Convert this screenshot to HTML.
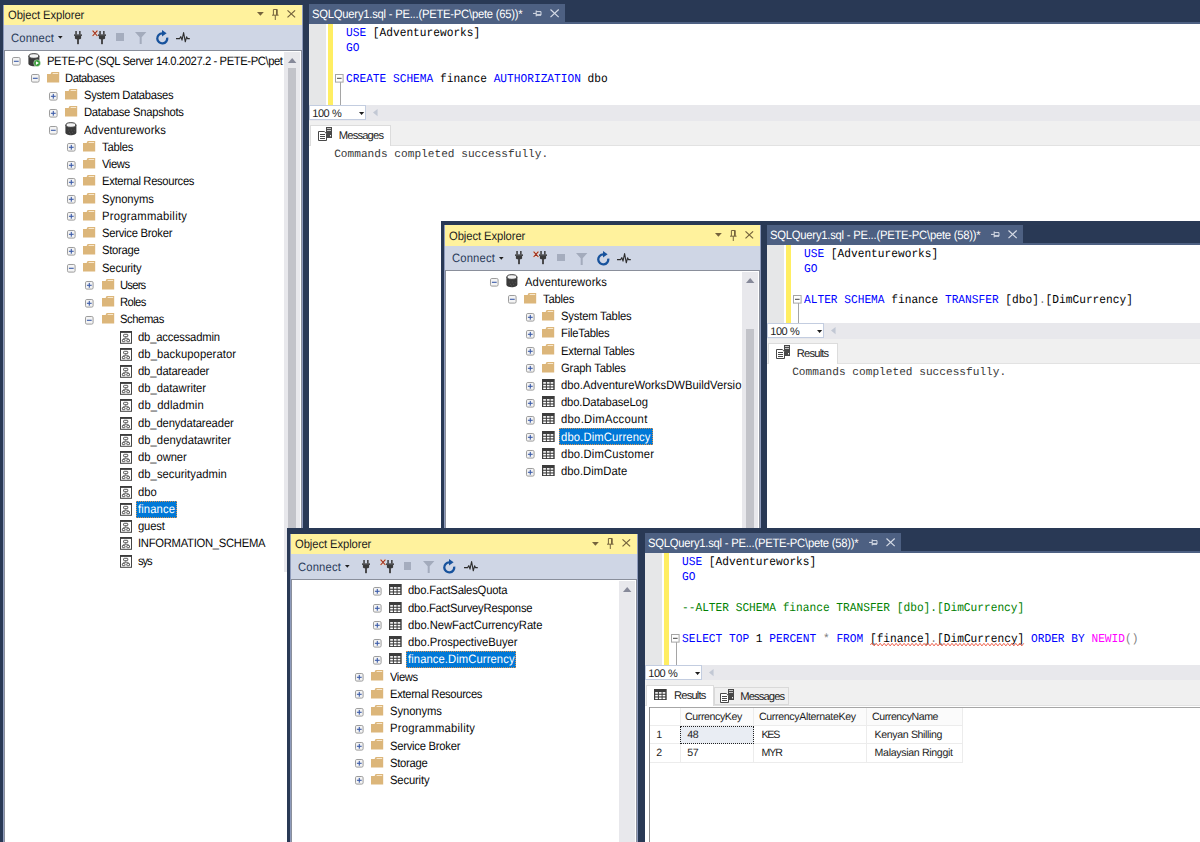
<!DOCTYPE html>
<html><head><meta charset="utf-8"><title>SSMS</title>
<style>
html,body{margin:0;padding:0}
body{width:1200px;height:842px;overflow:hidden;background:#293955;position:relative}
#r{position:absolute;left:0;top:0;width:1200px;height:842px;overflow:hidden}
#r>div,#r>svg,#r>span{position:absolute;display:block}
.t{white-space:pre;line-height:0;text-rendering:geometricPrecision}
svg{overflow:visible}
</style></head><body><div id="r">
<div style="left:0px;top:0px;width:1200px;height:842px;background:#293955;"></div>
<div style="left:3px;top:5px;width:300px;height:837px;background:#8e9bbc;"></div>
<div style="left:4px;top:5px;width:298px;height:20px;background:#fff29d;"></div>
<span class="t" style='left:7.9px;top:15px;font-family:"Liberation Sans", sans-serif;font-size:12.1px;color:#1e1e1e;letter-spacing:-0.09px;transform:scaleX(0.93);transform-origin:0 0;'>Object Explorer</span>
<svg style="left:256.7px;top:12.45px" width="6.8" height="4" viewBox="0 0 6.8 4"><path d="M0 0 H6.8 L3.4 3.8 Z" fill="#75633d"/></svg>
<svg style="left:272.4px;top:9.25px" width="6.6" height="11.2" viewBox="0 0 6.6 11.2"><path d="M1.4 0.5 H5.2 V6 M1.4 0.5 V6 M0 6.2 H6.6 M3.3 6.2 V11" fill="none" stroke="#75633d" stroke-width="1"/><rect x="4" y="0.5" width="1.2" height="5.6" fill="#75633d"/></svg>
<svg style="left:286.8px;top:10.05px" width="8.6" height="7.8" viewBox="0 0 8.6 7.8"><path d="M0.5 0.4 L8.1 7.4 M8.1 0.4 L0.5 7.4" stroke="#75633d" stroke-width="1.25" fill="none"/></svg>
<div style="left:4px;top:25px;width:298px;height:25px;background:#cfd6e5;"></div>
<span class="t" style='left:10.8px;top:38px;font-family:"Liberation Sans", sans-serif;font-size:12.1px;color:#2a3b5a;letter-spacing:0.16px;transform:scaleX(0.93);transform-origin:0 0;'>Connect</span>
<svg style="left:57.6px;top:35.95px" width="4.6" height="2.8" viewBox="0 0 4.6 2.8"><path d="M0 0 H4.6 L2.3 2.7 Z" fill="#1e1e1e"/></svg>
<svg style="left:74px;top:30.75px" width="8" height="13.2" viewBox="0 0 8 13.2"><rect x="1.3" y="0" width="1.5" height="3.6" fill="#3b3b3b"/><rect x="5.1" y="0" width="1.5" height="3.6" fill="#3b3b3b"/><rect x="0" y="3.4" width="8" height="1.5" fill="#3b3b3b"/><path d="M0.9 4.9 H7.1 V7.4 L6 8.3 H2 L0.9 7.4 Z" fill="#3b3b3b"/><rect x="3.1" y="8" width="1.8" height="5.2" fill="#3b3b3b"/></svg>
<svg style="left:92px;top:30.35px" width="6" height="6.6" viewBox="0 0 6 6.6"><path d="M0.6 0.6 L5.4 6 M5.4 0.6 L0.6 6" stroke="#ecd9c3" stroke-width="2.3" fill="none"/><path d="M0.6 0.6 L5.4 6 M5.4 0.6 L0.6 6" stroke="#9c2b1e" stroke-width="1.05" fill="none"/></svg>
<svg style="left:98.2px;top:30.75px" width="8" height="13.2" viewBox="0 0 8 13.2"><rect x="1.3" y="0" width="1.5" height="3.6" fill="#3b3b3b"/><rect x="5.1" y="0" width="1.5" height="3.6" fill="#3b3b3b"/><rect x="0" y="3.4" width="8" height="1.5" fill="#3b3b3b"/><path d="M0.9 4.9 H7.1 V7.4 L6 8.3 H2 L0.9 7.4 Z" fill="#3b3b3b"/><rect x="3.1" y="8" width="1.8" height="5.2" fill="#3b3b3b"/></svg>
<div style="left:116.2px;top:33.35px;width:7.4px;height:7.4px;background:#a5adbe;"></div>
<svg style="left:135.2px;top:31.85px" width="11.4" height="12" viewBox="0 0 11.4 12"><path d="M0 0 H11.4 L6.7 5.2 V12 H4.7 V5.2 Z" fill="#a3abbc"/></svg>
<svg style="left:155.5px;top:29.85px" width="13" height="14.6" viewBox="0 0 13 14.6"><path d="M6.3 3.4 A5 5 0 1 0 11.2 7.6" fill="none" stroke="#17529c" stroke-width="2.3"/><path d="M6 0 L10.6 3.2 L6 6.6 Z" fill="#17529c"/></svg>
<svg style="left:176.2px;top:32.25px" width="13.8" height="10.4" viewBox="0 0 13.8 10.4"><path d="M0 6.6 H3.6 L4.9 4.6 L6 8.2 L7.6 0.6 L9.3 9.8 L10.6 4.8 L11.4 6.6 H13.8" fill="none" stroke="#2e2e2e" stroke-width="1.1" stroke-linejoin="round"/></svg>
<div style="left:4px;top:50px;width:298px;height:792px;background:#8a8f9b;"></div>
<div style="left:5px;top:51px;width:296px;height:791px;background:#fff;"></div>
<div style="left:284px;top:52px;width:16px;height:520px;background:#e8e8ec;"></div>
<svg style="left:287.6px;top:57.6px" width="8.4" height="5" viewBox="0 0 8.4 5"><path d="M0 5 L4.2 0 L8.4 5 Z" fill="#868999"/></svg>
<div style="left:287.6px;top:68px;width:8.4px;height:503px;background:#c2c3c9;"></div>
<svg style="left:12.4px;top:57.25px" width="8.6" height="8.6" viewBox="0 0 8.6 8.6"><rect x="0.5" y="0.5" width="7.6" height="7.6" rx="1.3" fill="#f4f4f4" stroke="#9c9c9c" stroke-width="1"/><rect x="1.9" y="3.75" width="4.8" height="1.1" fill="#3d5ca8"/></svg>
<svg style="left:28.4px;top:53.15px" width="13" height="14" viewBox="0 0 13 14"><path d="M0.4 3 V10.6 C0.4 12.3 3 13.3 5.9 13.3 C8.8 13.3 11.4 12.3 11.4 10.6 V3 Z" fill="#3a3a3a"/><ellipse cx="5.9" cy="3" rx="5" ry="2.3" fill="#f4f4f4" stroke="#3a3a3a" stroke-width="1"/><circle cx="9.1" cy="10.1" r="3.4" fill="#339933" stroke="#e8f3e8" stroke-width="0.5"/><path d="M7.9 8.3 L11 10.1 L7.9 11.9 Z" fill="#fff"/></svg>
<span class="t" style='left:47.2px;top:61px;font-family:"Liberation Sans", sans-serif;font-size:12.1px;color:#0a0a0a;letter-spacing:-0.44px;transform:scaleX(0.93);transform-origin:0 0;'>PETE-PC (SQL Server 14.0.2027.2 - PETE-PC\pet</span>
<svg style="left:30.65px;top:74.48px" width="8.6" height="8.6" viewBox="0 0 8.6 8.6"><rect x="0.5" y="0.5" width="7.6" height="7.6" rx="1.3" fill="#f4f4f4" stroke="#9c9c9c" stroke-width="1"/><rect x="1.9" y="3.75" width="4.8" height="1.1" fill="#3d5ca8"/></svg>
<svg style="left:46.75px;top:71.88px" width="12.2" height="10.4" viewBox="0 0 12.2 10.4"><path d="M0 2 H3.6 L4.6 0 H12.2 V10.4 H0 Z" fill="#dcb67a"/><rect x="5.6" y="1.1" width="5.6" height="0.8" fill="#fff6e4"/></svg>
<span class="t" style='left:65.42px;top:78px;font-family:"Liberation Sans", sans-serif;font-size:12.1px;color:#0a0a0a;letter-spacing:-0.51px;transform:scaleX(0.93);transform-origin:0 0;'>Databases</span>
<svg style="left:48.9px;top:91.72px" width="8.6" height="8.6" viewBox="0 0 8.6 8.6"><rect x="0.5" y="0.5" width="7.6" height="7.6" rx="1.3" fill="#f4f4f4" stroke="#9c9c9c" stroke-width="1"/><rect x="1.9" y="3.75" width="4.8" height="1.1" fill="#3d5ca8"/><rect x="3.75" y="1.9" width="1.1" height="4.8" fill="#3d5ca8"/></svg>
<svg style="left:65px;top:89.12px" width="12.2" height="10.4" viewBox="0 0 12.2 10.4"><path d="M0 2 H3.6 L4.6 0 H12.2 V10.4 H0 Z" fill="#dcb67a"/><rect x="5.6" y="1.1" width="5.6" height="0.8" fill="#fff6e4"/></svg>
<span class="t" style='left:83.64px;top:95px;font-family:"Liberation Sans", sans-serif;font-size:12.1px;color:#0a0a0a;letter-spacing:-0.35px;transform:scaleX(0.93);transform-origin:0 0;'>System Databases</span>
<svg style="left:48.9px;top:108.95px" width="8.6" height="8.6" viewBox="0 0 8.6 8.6"><rect x="0.5" y="0.5" width="7.6" height="7.6" rx="1.3" fill="#f4f4f4" stroke="#9c9c9c" stroke-width="1"/><rect x="1.9" y="3.75" width="4.8" height="1.1" fill="#3d5ca8"/><rect x="3.75" y="1.9" width="1.1" height="4.8" fill="#3d5ca8"/></svg>
<svg style="left:65px;top:106.35px" width="12.2" height="10.4" viewBox="0 0 12.2 10.4"><path d="M0 2 H3.6 L4.6 0 H12.2 V10.4 H0 Z" fill="#dcb67a"/><rect x="5.6" y="1.1" width="5.6" height="0.8" fill="#fff6e4"/></svg>
<span class="t" style='left:83.64px;top:112px;font-family:"Liberation Sans", sans-serif;font-size:12.1px;color:#0a0a0a;letter-spacing:-0.28px;transform:scaleX(0.93);transform-origin:0 0;'>Database Snapshots</span>
<svg style="left:48.9px;top:126.19px" width="8.6" height="8.6" viewBox="0 0 8.6 8.6"><rect x="0.5" y="0.5" width="7.6" height="7.6" rx="1.3" fill="#f4f4f4" stroke="#9c9c9c" stroke-width="1"/><rect x="1.9" y="3.75" width="4.8" height="1.1" fill="#3d5ca8"/></svg>
<svg style="left:65.1px;top:122.19px" width="11.8" height="13.6" viewBox="0 0 11.8 13.6"><path d="M0.4 3 V10.6 C0.4 12.3 3 13.3 5.9 13.3 C8.8 13.3 11.4 12.3 11.4 10.6 V3 Z" fill="#3a3a3a"/><ellipse cx="5.9" cy="3" rx="5" ry="2.3" fill="#f4f4f4" stroke="#3a3a3a" stroke-width="1"/><circle cx="3.2" cy="8" r="0.45" fill="#6a6a6a"/><circle cx="6.2" cy="8" r="0.45" fill="#6a6a6a"/><circle cx="9.2" cy="8.8" r="0.45" fill="#6a6a6a"/><circle cx="4.6" cy="10.2" r="0.45" fill="#6a6a6a"/><circle cx="7.6" cy="10.2" r="0.45" fill="#6a6a6a"/><circle cx="5.6" cy="12" r="0.45" fill="#6a6a6a"/></svg>
<span class="t" style='left:83.64px;top:130px;font-family:"Liberation Sans", sans-serif;font-size:12.1px;color:#0a0a0a;letter-spacing:0.1px;transform:scaleX(0.93);transform-origin:0 0;'>Adventureworks</span>
<svg style="left:67.15px;top:143.42px" width="8.6" height="8.6" viewBox="0 0 8.6 8.6"><rect x="0.5" y="0.5" width="7.6" height="7.6" rx="1.3" fill="#f4f4f4" stroke="#9c9c9c" stroke-width="1"/><rect x="1.9" y="3.75" width="4.8" height="1.1" fill="#3d5ca8"/><rect x="3.75" y="1.9" width="1.1" height="4.8" fill="#3d5ca8"/></svg>
<svg style="left:83.25px;top:140.82px" width="12.2" height="10.4" viewBox="0 0 12.2 10.4"><path d="M0 2 H3.6 L4.6 0 H12.2 V10.4 H0 Z" fill="#dcb67a"/><rect x="5.6" y="1.1" width="5.6" height="0.8" fill="#fff6e4"/></svg>
<span class="t" style='left:101.86px;top:147px;font-family:"Liberation Sans", sans-serif;font-size:12.1px;color:#0a0a0a;letter-spacing:-0.22px;transform:scaleX(0.93);transform-origin:0 0;'>Tables</span>
<svg style="left:67.15px;top:160.66px" width="8.6" height="8.6" viewBox="0 0 8.6 8.6"><rect x="0.5" y="0.5" width="7.6" height="7.6" rx="1.3" fill="#f4f4f4" stroke="#9c9c9c" stroke-width="1"/><rect x="1.9" y="3.75" width="4.8" height="1.1" fill="#3d5ca8"/><rect x="3.75" y="1.9" width="1.1" height="4.8" fill="#3d5ca8"/></svg>
<svg style="left:83.25px;top:158.06px" width="12.2" height="10.4" viewBox="0 0 12.2 10.4"><path d="M0 2 H3.6 L4.6 0 H12.2 V10.4 H0 Z" fill="#dcb67a"/><rect x="5.6" y="1.1" width="5.6" height="0.8" fill="#fff6e4"/></svg>
<span class="t" style='left:101.86px;top:164px;font-family:"Liberation Sans", sans-serif;font-size:12.1px;color:#0a0a0a;letter-spacing:-0.48px;transform:scaleX(0.93);transform-origin:0 0;'>Views</span>
<svg style="left:67.15px;top:177.89px" width="8.6" height="8.6" viewBox="0 0 8.6 8.6"><rect x="0.5" y="0.5" width="7.6" height="7.6" rx="1.3" fill="#f4f4f4" stroke="#9c9c9c" stroke-width="1"/><rect x="1.9" y="3.75" width="4.8" height="1.1" fill="#3d5ca8"/><rect x="3.75" y="1.9" width="1.1" height="4.8" fill="#3d5ca8"/></svg>
<svg style="left:83.25px;top:175.29px" width="12.2" height="10.4" viewBox="0 0 12.2 10.4"><path d="M0 2 H3.6 L4.6 0 H12.2 V10.4 H0 Z" fill="#dcb67a"/><rect x="5.6" y="1.1" width="5.6" height="0.8" fill="#fff6e4"/></svg>
<span class="t" style='left:101.86px;top:181px;font-family:"Liberation Sans", sans-serif;font-size:12.1px;color:#0a0a0a;letter-spacing:-0.36px;transform:scaleX(0.93);transform-origin:0 0;'>External Resources</span>
<svg style="left:67.15px;top:195.13px" width="8.6" height="8.6" viewBox="0 0 8.6 8.6"><rect x="0.5" y="0.5" width="7.6" height="7.6" rx="1.3" fill="#f4f4f4" stroke="#9c9c9c" stroke-width="1"/><rect x="1.9" y="3.75" width="4.8" height="1.1" fill="#3d5ca8"/><rect x="3.75" y="1.9" width="1.1" height="4.8" fill="#3d5ca8"/></svg>
<svg style="left:83.25px;top:192.53px" width="12.2" height="10.4" viewBox="0 0 12.2 10.4"><path d="M0 2 H3.6 L4.6 0 H12.2 V10.4 H0 Z" fill="#dcb67a"/><rect x="5.6" y="1.1" width="5.6" height="0.8" fill="#fff6e4"/></svg>
<span class="t" style='left:101.86px;top:199px;font-family:"Liberation Sans", sans-serif;font-size:12.1px;color:#0a0a0a;letter-spacing:-0.08px;transform:scaleX(0.93);transform-origin:0 0;'>Synonyms</span>
<svg style="left:67.15px;top:212.37px" width="8.6" height="8.6" viewBox="0 0 8.6 8.6"><rect x="0.5" y="0.5" width="7.6" height="7.6" rx="1.3" fill="#f4f4f4" stroke="#9c9c9c" stroke-width="1"/><rect x="1.9" y="3.75" width="4.8" height="1.1" fill="#3d5ca8"/><rect x="3.75" y="1.9" width="1.1" height="4.8" fill="#3d5ca8"/></svg>
<svg style="left:83.25px;top:209.77px" width="12.2" height="10.4" viewBox="0 0 12.2 10.4"><path d="M0 2 H3.6 L4.6 0 H12.2 V10.4 H0 Z" fill="#dcb67a"/><rect x="5.6" y="1.1" width="5.6" height="0.8" fill="#fff6e4"/></svg>
<span class="t" style='left:101.86px;top:216px;font-family:"Liberation Sans", sans-serif;font-size:12.1px;color:#0a0a0a;letter-spacing:0.28px;transform:scaleX(0.93);transform-origin:0 0;'>Programmability</span>
<svg style="left:67.15px;top:229.6px" width="8.6" height="8.6" viewBox="0 0 8.6 8.6"><rect x="0.5" y="0.5" width="7.6" height="7.6" rx="1.3" fill="#f4f4f4" stroke="#9c9c9c" stroke-width="1"/><rect x="1.9" y="3.75" width="4.8" height="1.1" fill="#3d5ca8"/><rect x="3.75" y="1.9" width="1.1" height="4.8" fill="#3d5ca8"/></svg>
<svg style="left:83.25px;top:227px" width="12.2" height="10.4" viewBox="0 0 12.2 10.4"><path d="M0 2 H3.6 L4.6 0 H12.2 V10.4 H0 Z" fill="#dcb67a"/><rect x="5.6" y="1.1" width="5.6" height="0.8" fill="#fff6e4"/></svg>
<span class="t" style='left:101.86px;top:233px;font-family:"Liberation Sans", sans-serif;font-size:12.1px;color:#0a0a0a;letter-spacing:-0.27px;transform:scaleX(0.93);transform-origin:0 0;'>Service Broker</span>
<svg style="left:67.15px;top:246.83px" width="8.6" height="8.6" viewBox="0 0 8.6 8.6"><rect x="0.5" y="0.5" width="7.6" height="7.6" rx="1.3" fill="#f4f4f4" stroke="#9c9c9c" stroke-width="1"/><rect x="1.9" y="3.75" width="4.8" height="1.1" fill="#3d5ca8"/><rect x="3.75" y="1.9" width="1.1" height="4.8" fill="#3d5ca8"/></svg>
<svg style="left:83.25px;top:244.23px" width="12.2" height="10.4" viewBox="0 0 12.2 10.4"><path d="M0 2 H3.6 L4.6 0 H12.2 V10.4 H0 Z" fill="#dcb67a"/><rect x="5.6" y="1.1" width="5.6" height="0.8" fill="#fff6e4"/></svg>
<span class="t" style='left:101.86px;top:250px;font-family:"Liberation Sans", sans-serif;font-size:12.1px;color:#0a0a0a;letter-spacing:-0.29px;transform:scaleX(0.93);transform-origin:0 0;'>Storage</span>
<svg style="left:67.15px;top:264.07px" width="8.6" height="8.6" viewBox="0 0 8.6 8.6"><rect x="0.5" y="0.5" width="7.6" height="7.6" rx="1.3" fill="#f4f4f4" stroke="#9c9c9c" stroke-width="1"/><rect x="1.9" y="3.75" width="4.8" height="1.1" fill="#3d5ca8"/></svg>
<svg style="left:83.25px;top:261.47px" width="12.2" height="10.4" viewBox="0 0 12.2 10.4"><path d="M0 2 H3.6 L4.6 0 H12.2 V10.4 H0 Z" fill="#dcb67a"/><rect x="5.6" y="1.1" width="5.6" height="0.8" fill="#fff6e4"/></svg>
<span class="t" style='left:101.86px;top:268px;font-family:"Liberation Sans", sans-serif;font-size:12.1px;color:#0a0a0a;letter-spacing:-0.17px;transform:scaleX(0.93);transform-origin:0 0;'>Security</span>
<svg style="left:85.4px;top:281.31px" width="8.6" height="8.6" viewBox="0 0 8.6 8.6"><rect x="0.5" y="0.5" width="7.6" height="7.6" rx="1.3" fill="#f4f4f4" stroke="#9c9c9c" stroke-width="1"/><rect x="1.9" y="3.75" width="4.8" height="1.1" fill="#3d5ca8"/><rect x="3.75" y="1.9" width="1.1" height="4.8" fill="#3d5ca8"/></svg>
<svg style="left:101.5px;top:278.71px" width="12.2" height="10.4" viewBox="0 0 12.2 10.4"><path d="M0 2 H3.6 L4.6 0 H12.2 V10.4 H0 Z" fill="#dcb67a"/><rect x="5.6" y="1.1" width="5.6" height="0.8" fill="#fff6e4"/></svg>
<span class="t" style='left:120.08px;top:285px;font-family:"Liberation Sans", sans-serif;font-size:12.1px;color:#0a0a0a;letter-spacing:-0.84px;transform:scaleX(0.93);transform-origin:0 0;'>Users</span>
<svg style="left:85.4px;top:298.54px" width="8.6" height="8.6" viewBox="0 0 8.6 8.6"><rect x="0.5" y="0.5" width="7.6" height="7.6" rx="1.3" fill="#f4f4f4" stroke="#9c9c9c" stroke-width="1"/><rect x="1.9" y="3.75" width="4.8" height="1.1" fill="#3d5ca8"/><rect x="3.75" y="1.9" width="1.1" height="4.8" fill="#3d5ca8"/></svg>
<svg style="left:101.5px;top:295.94px" width="12.2" height="10.4" viewBox="0 0 12.2 10.4"><path d="M0 2 H3.6 L4.6 0 H12.2 V10.4 H0 Z" fill="#dcb67a"/><rect x="5.6" y="1.1" width="5.6" height="0.8" fill="#fff6e4"/></svg>
<span class="t" style='left:120.08px;top:302px;font-family:"Liberation Sans", sans-serif;font-size:12.1px;color:#0a0a0a;letter-spacing:-0.67px;transform:scaleX(0.93);transform-origin:0 0;'>Roles</span>
<svg style="left:85.4px;top:315.77px" width="8.6" height="8.6" viewBox="0 0 8.6 8.6"><rect x="0.5" y="0.5" width="7.6" height="7.6" rx="1.3" fill="#f4f4f4" stroke="#9c9c9c" stroke-width="1"/><rect x="1.9" y="3.75" width="4.8" height="1.1" fill="#3d5ca8"/></svg>
<svg style="left:101.5px;top:313.18px" width="12.2" height="10.4" viewBox="0 0 12.2 10.4"><path d="M0 2 H3.6 L4.6 0 H12.2 V10.4 H0 Z" fill="#dcb67a"/><rect x="5.6" y="1.1" width="5.6" height="0.8" fill="#fff6e4"/></svg>
<span class="t" style='left:120.08px;top:319px;font-family:"Liberation Sans", sans-serif;font-size:12.1px;color:#0a0a0a;letter-spacing:-0.47px;transform:scaleX(0.93);transform-origin:0 0;'>Schemas</span>
<svg style="left:119.55px;top:330.51px" width="12" height="12.8" viewBox="0 0 12 12.8"><rect x="0.5" y="0.5" width="11" height="11.8" fill="#fff" stroke="#444"/><rect x="0" y="0" width="12" height="1.9" fill="#3c3c3c"/><rect x="3.6" y="3.3" width="4.2" height="2.4" rx="0.7" fill="#fff" stroke="#4a4a4a" stroke-width="0.9"/><path d="M5.7 5.8 V7.4 M3.6 8.6 V7.4 H8.2 V8.6" fill="none" stroke="#666" stroke-width="0.8"/><rect x="2.3" y="8.4" width="2.7" height="2.3" rx="0.6" fill="#fff" stroke="#4a4a4a" stroke-width="0.9"/><rect x="6.8" y="8.4" width="2.7" height="2.3" rx="0.6" fill="#fff" stroke="#4a4a4a" stroke-width="0.9"/></svg>
<span class="t" style='left:138.3px;top:337px;font-family:"Liberation Sans", sans-serif;font-size:12.1px;color:#0a0a0a;letter-spacing:-0.2px;transform:scaleX(0.93);transform-origin:0 0;'>db_accessadmin</span>
<svg style="left:119.55px;top:347.75px" width="12" height="12.8" viewBox="0 0 12 12.8"><rect x="0.5" y="0.5" width="11" height="11.8" fill="#fff" stroke="#444"/><rect x="0" y="0" width="12" height="1.9" fill="#3c3c3c"/><rect x="3.6" y="3.3" width="4.2" height="2.4" rx="0.7" fill="#fff" stroke="#4a4a4a" stroke-width="0.9"/><path d="M5.7 5.8 V7.4 M3.6 8.6 V7.4 H8.2 V8.6" fill="none" stroke="#666" stroke-width="0.8"/><rect x="2.3" y="8.4" width="2.7" height="2.3" rx="0.6" fill="#fff" stroke="#4a4a4a" stroke-width="0.9"/><rect x="6.8" y="8.4" width="2.7" height="2.3" rx="0.6" fill="#fff" stroke="#4a4a4a" stroke-width="0.9"/></svg>
<span class="t" style='left:138.3px;top:354px;font-family:"Liberation Sans", sans-serif;font-size:12.1px;color:#0a0a0a;letter-spacing:0.07px;transform:scaleX(0.93);transform-origin:0 0;'>db_backupoperator</span>
<svg style="left:119.55px;top:364.98px" width="12" height="12.8" viewBox="0 0 12 12.8"><rect x="0.5" y="0.5" width="11" height="11.8" fill="#fff" stroke="#444"/><rect x="0" y="0" width="12" height="1.9" fill="#3c3c3c"/><rect x="3.6" y="3.3" width="4.2" height="2.4" rx="0.7" fill="#fff" stroke="#4a4a4a" stroke-width="0.9"/><path d="M5.7 5.8 V7.4 M3.6 8.6 V7.4 H8.2 V8.6" fill="none" stroke="#666" stroke-width="0.8"/><rect x="2.3" y="8.4" width="2.7" height="2.3" rx="0.6" fill="#fff" stroke="#4a4a4a" stroke-width="0.9"/><rect x="6.8" y="8.4" width="2.7" height="2.3" rx="0.6" fill="#fff" stroke="#4a4a4a" stroke-width="0.9"/></svg>
<span class="t" style='left:138.3px;top:371px;font-family:"Liberation Sans", sans-serif;font-size:12.1px;color:#0a0a0a;letter-spacing:-0.17px;transform:scaleX(0.93);transform-origin:0 0;'>db_datareader</span>
<svg style="left:119.55px;top:382.21px" width="12" height="12.8" viewBox="0 0 12 12.8"><rect x="0.5" y="0.5" width="11" height="11.8" fill="#fff" stroke="#444"/><rect x="0" y="0" width="12" height="1.9" fill="#3c3c3c"/><rect x="3.6" y="3.3" width="4.2" height="2.4" rx="0.7" fill="#fff" stroke="#4a4a4a" stroke-width="0.9"/><path d="M5.7 5.8 V7.4 M3.6 8.6 V7.4 H8.2 V8.6" fill="none" stroke="#666" stroke-width="0.8"/><rect x="2.3" y="8.4" width="2.7" height="2.3" rx="0.6" fill="#fff" stroke="#4a4a4a" stroke-width="0.9"/><rect x="6.8" y="8.4" width="2.7" height="2.3" rx="0.6" fill="#fff" stroke="#4a4a4a" stroke-width="0.9"/></svg>
<span class="t" style='left:138.3px;top:388px;font-family:"Liberation Sans", sans-serif;font-size:12.1px;color:#0a0a0a;letter-spacing:-0.01px;transform:scaleX(0.93);transform-origin:0 0;'>db_datawriter</span>
<svg style="left:119.55px;top:399.45px" width="12" height="12.8" viewBox="0 0 12 12.8"><rect x="0.5" y="0.5" width="11" height="11.8" fill="#fff" stroke="#444"/><rect x="0" y="0" width="12" height="1.9" fill="#3c3c3c"/><rect x="3.6" y="3.3" width="4.2" height="2.4" rx="0.7" fill="#fff" stroke="#4a4a4a" stroke-width="0.9"/><path d="M5.7 5.8 V7.4 M3.6 8.6 V7.4 H8.2 V8.6" fill="none" stroke="#666" stroke-width="0.8"/><rect x="2.3" y="8.4" width="2.7" height="2.3" rx="0.6" fill="#fff" stroke="#4a4a4a" stroke-width="0.9"/><rect x="6.8" y="8.4" width="2.7" height="2.3" rx="0.6" fill="#fff" stroke="#4a4a4a" stroke-width="0.9"/></svg>
<span class="t" style='left:138.3px;top:405px;font-family:"Liberation Sans", sans-serif;font-size:12.1px;color:#0a0a0a;letter-spacing:0.14px;transform:scaleX(0.93);transform-origin:0 0;'>db_ddladmin</span>
<svg style="left:119.55px;top:416.69px" width="12" height="12.8" viewBox="0 0 12 12.8"><rect x="0.5" y="0.5" width="11" height="11.8" fill="#fff" stroke="#444"/><rect x="0" y="0" width="12" height="1.9" fill="#3c3c3c"/><rect x="3.6" y="3.3" width="4.2" height="2.4" rx="0.7" fill="#fff" stroke="#4a4a4a" stroke-width="0.9"/><path d="M5.7 5.8 V7.4 M3.6 8.6 V7.4 H8.2 V8.6" fill="none" stroke="#666" stroke-width="0.8"/><rect x="2.3" y="8.4" width="2.7" height="2.3" rx="0.6" fill="#fff" stroke="#4a4a4a" stroke-width="0.9"/><rect x="6.8" y="8.4" width="2.7" height="2.3" rx="0.6" fill="#fff" stroke="#4a4a4a" stroke-width="0.9"/></svg>
<span class="t" style='left:138.3px;top:423px;font-family:"Liberation Sans", sans-serif;font-size:12.1px;color:#0a0a0a;letter-spacing:-0.12px;transform:scaleX(0.93);transform-origin:0 0;'>db_denydatareader</span>
<svg style="left:119.55px;top:433.92px" width="12" height="12.8" viewBox="0 0 12 12.8"><rect x="0.5" y="0.5" width="11" height="11.8" fill="#fff" stroke="#444"/><rect x="0" y="0" width="12" height="1.9" fill="#3c3c3c"/><rect x="3.6" y="3.3" width="4.2" height="2.4" rx="0.7" fill="#fff" stroke="#4a4a4a" stroke-width="0.9"/><path d="M5.7 5.8 V7.4 M3.6 8.6 V7.4 H8.2 V8.6" fill="none" stroke="#666" stroke-width="0.8"/><rect x="2.3" y="8.4" width="2.7" height="2.3" rx="0.6" fill="#fff" stroke="#4a4a4a" stroke-width="0.9"/><rect x="6.8" y="8.4" width="2.7" height="2.3" rx="0.6" fill="#fff" stroke="#4a4a4a" stroke-width="0.9"/></svg>
<span class="t" style='left:138.3px;top:440px;font-family:"Liberation Sans", sans-serif;font-size:12.1px;color:#0a0a0a;letter-spacing:0.03px;transform:scaleX(0.93);transform-origin:0 0;'>db_denydatawriter</span>
<svg style="left:119.55px;top:451.15px" width="12" height="12.8" viewBox="0 0 12 12.8"><rect x="0.5" y="0.5" width="11" height="11.8" fill="#fff" stroke="#444"/><rect x="0" y="0" width="12" height="1.9" fill="#3c3c3c"/><rect x="3.6" y="3.3" width="4.2" height="2.4" rx="0.7" fill="#fff" stroke="#4a4a4a" stroke-width="0.9"/><path d="M5.7 5.8 V7.4 M3.6 8.6 V7.4 H8.2 V8.6" fill="none" stroke="#666" stroke-width="0.8"/><rect x="2.3" y="8.4" width="2.7" height="2.3" rx="0.6" fill="#fff" stroke="#4a4a4a" stroke-width="0.9"/><rect x="6.8" y="8.4" width="2.7" height="2.3" rx="0.6" fill="#fff" stroke="#4a4a4a" stroke-width="0.9"/></svg>
<span class="t" style='left:138.3px;top:457px;font-family:"Liberation Sans", sans-serif;font-size:12.1px;color:#0a0a0a;letter-spacing:-0.1px;transform:scaleX(0.93);transform-origin:0 0;'>db_owner</span>
<svg style="left:119.55px;top:468.39px" width="12" height="12.8" viewBox="0 0 12 12.8"><rect x="0.5" y="0.5" width="11" height="11.8" fill="#fff" stroke="#444"/><rect x="0" y="0" width="12" height="1.9" fill="#3c3c3c"/><rect x="3.6" y="3.3" width="4.2" height="2.4" rx="0.7" fill="#fff" stroke="#4a4a4a" stroke-width="0.9"/><path d="M5.7 5.8 V7.4 M3.6 8.6 V7.4 H8.2 V8.6" fill="none" stroke="#666" stroke-width="0.8"/><rect x="2.3" y="8.4" width="2.7" height="2.3" rx="0.6" fill="#fff" stroke="#4a4a4a" stroke-width="0.9"/><rect x="6.8" y="8.4" width="2.7" height="2.3" rx="0.6" fill="#fff" stroke="#4a4a4a" stroke-width="0.9"/></svg>
<span class="t" style='left:138.3px;top:474px;font-family:"Liberation Sans", sans-serif;font-size:12.1px;color:#0a0a0a;letter-spacing:0.04px;transform:scaleX(0.93);transform-origin:0 0;'>db_securityadmin</span>
<svg style="left:119.55px;top:485.62px" width="12" height="12.8" viewBox="0 0 12 12.8"><rect x="0.5" y="0.5" width="11" height="11.8" fill="#fff" stroke="#444"/><rect x="0" y="0" width="12" height="1.9" fill="#3c3c3c"/><rect x="3.6" y="3.3" width="4.2" height="2.4" rx="0.7" fill="#fff" stroke="#4a4a4a" stroke-width="0.9"/><path d="M5.7 5.8 V7.4 M3.6 8.6 V7.4 H8.2 V8.6" fill="none" stroke="#666" stroke-width="0.8"/><rect x="2.3" y="8.4" width="2.7" height="2.3" rx="0.6" fill="#fff" stroke="#4a4a4a" stroke-width="0.9"/><rect x="6.8" y="8.4" width="2.7" height="2.3" rx="0.6" fill="#fff" stroke="#4a4a4a" stroke-width="0.9"/></svg>
<span class="t" style='left:138.3px;top:492px;font-family:"Liberation Sans", sans-serif;font-size:12.1px;color:#0a0a0a;letter-spacing:-0.01px;transform:scaleX(0.93);transform-origin:0 0;'>dbo</span>
<svg style="left:119.55px;top:502.86px" width="12" height="12.8" viewBox="0 0 12 12.8"><rect x="0.5" y="0.5" width="11" height="11.8" fill="#fff" stroke="#444"/><rect x="0" y="0" width="12" height="1.9" fill="#3c3c3c"/><rect x="3.6" y="3.3" width="4.2" height="2.4" rx="0.7" fill="#fff" stroke="#4a4a4a" stroke-width="0.9"/><path d="M5.7 5.8 V7.4 M3.6 8.6 V7.4 H8.2 V8.6" fill="none" stroke="#666" stroke-width="0.8"/><rect x="2.3" y="8.4" width="2.7" height="2.3" rx="0.6" fill="#fff" stroke="#4a4a4a" stroke-width="0.9"/><rect x="6.8" y="8.4" width="2.7" height="2.3" rx="0.6" fill="#fff" stroke="#4a4a4a" stroke-width="0.9"/></svg>
<div style="left:136px;top:500.56px;width:41.3px;height:17px;background:#0078d7;outline:1px dotted #d9924f;outline-offset:-1px;"></div>
<span class="t" style='left:138.3px;top:509px;font-family:"Liberation Sans", sans-serif;font-size:12.1px;color:#fff;letter-spacing:0.13px;transform:scaleX(0.93);transform-origin:0 0;'>finance</span>
<svg style="left:119.55px;top:520.1px" width="12" height="12.8" viewBox="0 0 12 12.8"><rect x="0.5" y="0.5" width="11" height="11.8" fill="#fff" stroke="#444"/><rect x="0" y="0" width="12" height="1.9" fill="#3c3c3c"/><rect x="3.6" y="3.3" width="4.2" height="2.4" rx="0.7" fill="#fff" stroke="#4a4a4a" stroke-width="0.9"/><path d="M5.7 5.8 V7.4 M3.6 8.6 V7.4 H8.2 V8.6" fill="none" stroke="#666" stroke-width="0.8"/><rect x="2.3" y="8.4" width="2.7" height="2.3" rx="0.6" fill="#fff" stroke="#4a4a4a" stroke-width="0.9"/><rect x="6.8" y="8.4" width="2.7" height="2.3" rx="0.6" fill="#fff" stroke="#4a4a4a" stroke-width="0.9"/></svg>
<span class="t" style='left:138.3px;top:526px;font-family:"Liberation Sans", sans-serif;font-size:12.1px;color:#0a0a0a;letter-spacing:-0.14px;transform:scaleX(0.93);transform-origin:0 0;'>guest</span>
<svg style="left:119.55px;top:537.33px" width="12" height="12.8" viewBox="0 0 12 12.8"><rect x="0.5" y="0.5" width="11" height="11.8" fill="#fff" stroke="#444"/><rect x="0" y="0" width="12" height="1.9" fill="#3c3c3c"/><rect x="3.6" y="3.3" width="4.2" height="2.4" rx="0.7" fill="#fff" stroke="#4a4a4a" stroke-width="0.9"/><path d="M5.7 5.8 V7.4 M3.6 8.6 V7.4 H8.2 V8.6" fill="none" stroke="#666" stroke-width="0.8"/><rect x="2.3" y="8.4" width="2.7" height="2.3" rx="0.6" fill="#fff" stroke="#4a4a4a" stroke-width="0.9"/><rect x="6.8" y="8.4" width="2.7" height="2.3" rx="0.6" fill="#fff" stroke="#4a4a4a" stroke-width="0.9"/></svg>
<span class="t" style='left:138.3px;top:543px;font-family:"Liberation Sans", sans-serif;font-size:12.1px;color:#0a0a0a;letter-spacing:-0.3px;transform:scaleX(0.93);transform-origin:0 0;'>INFORMATION_SCHEMA</span>
<svg style="left:119.55px;top:554.57px" width="12" height="12.8" viewBox="0 0 12 12.8"><rect x="0.5" y="0.5" width="11" height="11.8" fill="#fff" stroke="#444"/><rect x="0" y="0" width="12" height="1.9" fill="#3c3c3c"/><rect x="3.6" y="3.3" width="4.2" height="2.4" rx="0.7" fill="#fff" stroke="#4a4a4a" stroke-width="0.9"/><path d="M5.7 5.8 V7.4 M3.6 8.6 V7.4 H8.2 V8.6" fill="none" stroke="#666" stroke-width="0.8"/><rect x="2.3" y="8.4" width="2.7" height="2.3" rx="0.6" fill="#fff" stroke="#4a4a4a" stroke-width="0.9"/><rect x="6.8" y="8.4" width="2.7" height="2.3" rx="0.6" fill="#fff" stroke="#4a4a4a" stroke-width="0.9"/></svg>
<span class="t" style='left:138.3px;top:561px;font-family:"Liberation Sans", sans-serif;font-size:12.1px;color:#0a0a0a;letter-spacing:-1.27px;transform:scaleX(0.93);transform-origin:0 0;'>sys</span>
<div style="left:309px;top:4px;width:256px;height:18px;background:#4d6082;"></div>
<div style="left:309px;top:21.6px;width:891px;height:2px;background:#4d6082;"></div>
<span class="t" style='left:312.4px;top:14px;font-family:"Liberation Sans", sans-serif;font-size:12.1px;color:#fff;letter-spacing:-0.25px;transform:scaleX(0.93);transform-origin:0 0;'>SQLQuery1.sql - PE...(PETE-PC\pete (65))*</span>
<svg style="left:532.6px;top:10.2px" width="8.6" height="6.8" viewBox="0 0 8.6 6.8"><path d="M0 3.4 H3.2 M3.2 0.4 V6.4 M3.2 1.6 H8 V5.2 H3.2" fill="none" stroke="#d6dbe6" stroke-width="1"/><rect x="3.2" y="4.2" width="4.8" height="1.2" fill="#d6dbe6"/></svg>
<svg style="left:550.2px;top:9.2px" width="9.2" height="8.6" viewBox="0 0 9.2 8.6"><path d="M0.5 0.5 L8.7 8.1 M8.7 0.5 L0.5 8.1" stroke="#d6dbe6" stroke-width="1.2" fill="none"/></svg>
<div style="left:309px;top:23.6px;width:891px;height:81.4px;background:#fff;"></div>
<div style="left:309px;top:23.6px;width:17px;height:81.4px;background:#e6e7e8;"></div>
<div style="left:328.4px;top:23.6px;width:5px;height:81.4px;background:#ffee62;"></div>
<span class="t" style='left:345.6px;top:33px;font-family:"Liberation Mono", monospace;font-size:12px;transform:scale(0.9319,1);transform-origin:0 0;'><span style="color:#0000ff">USE</span><span style="color:#000"> [Adventureworks]</span></span>
<span class="t" style='left:345.6px;top:48px;font-family:"Liberation Mono", monospace;font-size:12px;transform:scale(0.9319,1);transform-origin:0 0;'><span style="color:#0000ff">GO</span></span>
<span class="t" style='left:345.6px;top:79px;font-family:"Liberation Mono", monospace;font-size:12px;transform:scale(0.9319,1);transform-origin:0 0;'><span style="color:#0000ff">CREATE</span><span style="color:#000"> </span><span style="color:#0000ff">SCHEMA</span><span style="color:#000"> finance </span><span style="color:#0000ff">AUTHORIZATION</span><span style="color:#000"> dbo</span></span>
<div style="left:339.6px;top:82.06px;width:1px;height:22.94px;background:#a5a5a5;"></div>
<svg style="left:335.4px;top:73.86px" width="8.6" height="8.6" viewBox="0 0 8.6 8.6"><rect x="0.5" y="0.5" width="7.6" height="7.6" fill="#fff" stroke="#a5a5a5"/><rect x="2" y="3.8" width="4.6" height="1" fill="#444"/></svg>
<div style="left:309px;top:105px;width:891px;height:15.6px;background:#e8e8ec;"></div>
<div style="left:309px;top:105px;width:57px;height:15.2px;background:#fff;border:1px solid #c3cde0;box-sizing:border-box;"></div>
<span class="t" style='left:312.2px;top:114px;font-family:"Liberation Sans", sans-serif;font-size:11px;color:#1e1e1e;letter-spacing:-0.4px;'>100 %</span>
<svg style="left:358.6px;top:112px" width="5.2" height="3" viewBox="0 0 5.2 3"><path d="M0 0 H5.2 L2.6 3 Z" fill="#1e1e1e"/></svg>
<svg style="left:373px;top:109.2px" width="4.6" height="7.2" viewBox="0 0 4.6 7.2"><path d="M4.6 0 V7.2 L0 3.6 Z" fill="#c2c8d4"/></svg>
<div style="left:309px;top:120.6px;width:891px;height:25.4px;background:#f0f0f0;"></div>
<div style="left:309px;top:145.4px;width:891px;height:1px;background:#e2e2e2;"></div>
<div style="left:309px;top:146.4px;width:891px;height:695.6px;background:#fff;"></div>
<div style="left:310px;top:125.2px;width:81px;height:21.2px;background:#fff;border:1px solid #dcdcdc;border-bottom:none;box-sizing:border-box;"></div>
<svg style="left:318px;top:127px" width="15" height="14" viewBox="0 0 15 14"><rect x="8" y="0" width="6" height="11" fill="#484848"/><rect x="9" y="1" width="4" height="1" fill="#c4c4c4"/><rect x="9" y="3" width="4" height="1" fill="#c4c4c4"/><rect x="12" y="8" width="1" height="1.4" fill="#f0f0f0"/><path d="M0.5 4.5 H6.3 L8.5 6.7 V13.5 H0.5 Z" fill="#fff" stroke="#484848" stroke-width="1"/><path d="M2 7.5 H7 M2 9.5 H7 M2 11.5 H7" stroke="#484848" stroke-width="1"/></svg>
<span class="t" style='left:338.8px;top:136px;font-family:"Liberation Sans", sans-serif;font-size:11.2px;color:#1e1e1e;letter-spacing:-0.83px;'>Messages</span>
<span class="t" style='left:334.2px;top:155px;font-family:"Liberation Mono", monospace;font-size:11.15px;color:#383838;'>Commands completed successfully.</span>
<div style="left:441px;top:221px;width:759px;height:311px;background:#293955;"></div>
<div style="left:444px;top:225px;width:317px;height:307px;background:#8e9bbc;"></div>
<div style="left:445px;top:225px;width:315px;height:21px;background:#fff29d;"></div>
<span class="t" style='left:449px;top:236px;font-family:"Liberation Sans", sans-serif;font-size:12.1px;color:#1e1e1e;letter-spacing:-0.09px;transform:scaleX(0.93);transform-origin:0 0;'>Object Explorer</span>
<svg style="left:714.7px;top:233.1px" width="6.8" height="4" viewBox="0 0 6.8 4"><path d="M0 0 H6.8 L3.4 3.8 Z" fill="#75633d"/></svg>
<svg style="left:730.4px;top:229.9px" width="6.6" height="11.2" viewBox="0 0 6.6 11.2"><path d="M1.4 0.5 H5.2 V6 M1.4 0.5 V6 M0 6.2 H6.6 M3.3 6.2 V11" fill="none" stroke="#75633d" stroke-width="1"/><rect x="4" y="0.5" width="1.2" height="5.6" fill="#75633d"/></svg>
<svg style="left:744.8px;top:230.7px" width="8.6" height="7.8" viewBox="0 0 8.6 7.8"><path d="M0.5 0.4 L8.1 7.4 M8.1 0.4 L0.5 7.4" stroke="#75633d" stroke-width="1.25" fill="none"/></svg>
<div style="left:445px;top:246px;width:315px;height:24px;background:#cfd6e5;"></div>
<span class="t" style='left:451.9px;top:258px;font-family:"Liberation Sans", sans-serif;font-size:12.1px;color:#2a3b5a;letter-spacing:0.16px;transform:scaleX(0.93);transform-origin:0 0;'>Connect</span>
<svg style="left:498.7px;top:256.6px" width="4.6" height="2.8" viewBox="0 0 4.6 2.8"><path d="M0 0 H4.6 L2.3 2.7 Z" fill="#1e1e1e"/></svg>
<svg style="left:515.1px;top:251.4px" width="8" height="13.2" viewBox="0 0 8 13.2"><rect x="1.3" y="0" width="1.5" height="3.6" fill="#3b3b3b"/><rect x="5.1" y="0" width="1.5" height="3.6" fill="#3b3b3b"/><rect x="0" y="3.4" width="8" height="1.5" fill="#3b3b3b"/><path d="M0.9 4.9 H7.1 V7.4 L6 8.3 H2 L0.9 7.4 Z" fill="#3b3b3b"/><rect x="3.1" y="8" width="1.8" height="5.2" fill="#3b3b3b"/></svg>
<svg style="left:533.1px;top:251px" width="6" height="6.6" viewBox="0 0 6 6.6"><path d="M0.6 0.6 L5.4 6 M5.4 0.6 L0.6 6" stroke="#ecd9c3" stroke-width="2.3" fill="none"/><path d="M0.6 0.6 L5.4 6 M5.4 0.6 L0.6 6" stroke="#9c2b1e" stroke-width="1.05" fill="none"/></svg>
<svg style="left:539.3px;top:251.4px" width="8" height="13.2" viewBox="0 0 8 13.2"><rect x="1.3" y="0" width="1.5" height="3.6" fill="#3b3b3b"/><rect x="5.1" y="0" width="1.5" height="3.6" fill="#3b3b3b"/><rect x="0" y="3.4" width="8" height="1.5" fill="#3b3b3b"/><path d="M0.9 4.9 H7.1 V7.4 L6 8.3 H2 L0.9 7.4 Z" fill="#3b3b3b"/><rect x="3.1" y="8" width="1.8" height="5.2" fill="#3b3b3b"/></svg>
<div style="left:557.3px;top:254px;width:7.4px;height:7.4px;background:#a5adbe;"></div>
<svg style="left:576.3px;top:252.5px" width="11.4" height="12" viewBox="0 0 11.4 12"><path d="M0 0 H11.4 L6.7 5.2 V12 H4.7 V5.2 Z" fill="#a3abbc"/></svg>
<svg style="left:596.6px;top:250.5px" width="13" height="14.6" viewBox="0 0 13 14.6"><path d="M6.3 3.4 A5 5 0 1 0 11.2 7.6" fill="none" stroke="#17529c" stroke-width="2.3"/><path d="M6 0 L10.6 3.2 L6 6.6 Z" fill="#17529c"/></svg>
<svg style="left:617.3px;top:252.9px" width="13.8" height="10.4" viewBox="0 0 13.8 10.4"><path d="M0 6.6 H3.6 L4.9 4.6 L6 8.2 L7.6 0.6 L9.3 9.8 L10.6 4.8 L11.4 6.6 H13.8" fill="none" stroke="#2e2e2e" stroke-width="1.1" stroke-linejoin="round"/></svg>
<div style="left:445px;top:270px;width:315px;height:262px;background:#8a8f9b;"></div>
<div style="left:446px;top:271px;width:313px;height:261px;background:#fff;"></div>
<div style="left:742px;top:272px;width:16px;height:260px;background:#e8e8ec;"></div>
<svg style="left:745.6px;top:277.6px" width="8.4" height="5" viewBox="0 0 8.4 5"><path d="M0 5 L4.2 0 L8.4 5 Z" fill="#868999"/></svg>
<div style="left:745.6px;top:329px;width:8.4px;height:203px;background:#c2c3c9;"></div>
<svg style="left:489.7px;top:278.1px" width="8.6" height="8.6" viewBox="0 0 8.6 8.6"><rect x="0.5" y="0.5" width="7.6" height="7.6" rx="1.3" fill="#f4f4f4" stroke="#9c9c9c" stroke-width="1"/><rect x="1.9" y="3.75" width="4.8" height="1.1" fill="#3d5ca8"/></svg>
<svg style="left:505.9px;top:274.1px" width="11.8" height="13.6" viewBox="0 0 11.8 13.6"><path d="M0.4 3 V10.6 C0.4 12.3 3 13.3 5.9 13.3 C8.8 13.3 11.4 12.3 11.4 10.6 V3 Z" fill="#3a3a3a"/><ellipse cx="5.9" cy="3" rx="5" ry="2.3" fill="#f4f4f4" stroke="#3a3a3a" stroke-width="1"/><circle cx="3.2" cy="8" r="0.45" fill="#6a6a6a"/><circle cx="6.2" cy="8" r="0.45" fill="#6a6a6a"/><circle cx="9.2" cy="8.8" r="0.45" fill="#6a6a6a"/><circle cx="4.6" cy="10.2" r="0.45" fill="#6a6a6a"/><circle cx="7.6" cy="10.2" r="0.45" fill="#6a6a6a"/><circle cx="5.6" cy="12" r="0.45" fill="#6a6a6a"/></svg>
<span class="t" style='left:524.84px;top:282px;font-family:"Liberation Sans", sans-serif;font-size:12.1px;color:#0a0a0a;letter-spacing:0.1px;transform:scaleX(0.93);transform-origin:0 0;'>Adventureworks</span>
<svg style="left:507.95px;top:295.33px" width="8.6" height="8.6" viewBox="0 0 8.6 8.6"><rect x="0.5" y="0.5" width="7.6" height="7.6" rx="1.3" fill="#f4f4f4" stroke="#9c9c9c" stroke-width="1"/><rect x="1.9" y="3.75" width="4.8" height="1.1" fill="#3d5ca8"/></svg>
<svg style="left:524.05px;top:292.74px" width="12.2" height="10.4" viewBox="0 0 12.2 10.4"><path d="M0 2 H3.6 L4.6 0 H12.2 V10.4 H0 Z" fill="#dcb67a"/><rect x="5.6" y="1.1" width="5.6" height="0.8" fill="#fff6e4"/></svg>
<span class="t" style='left:543.06px;top:299px;font-family:"Liberation Sans", sans-serif;font-size:12.1px;color:#0a0a0a;letter-spacing:-0.22px;transform:scaleX(0.93);transform-origin:0 0;'>Tables</span>
<svg style="left:526.2px;top:312.57px" width="8.6" height="8.6" viewBox="0 0 8.6 8.6"><rect x="0.5" y="0.5" width="7.6" height="7.6" rx="1.3" fill="#f4f4f4" stroke="#9c9c9c" stroke-width="1"/><rect x="1.9" y="3.75" width="4.8" height="1.1" fill="#3d5ca8"/><rect x="3.75" y="1.9" width="1.1" height="4.8" fill="#3d5ca8"/></svg>
<svg style="left:542.3px;top:309.97px" width="12.2" height="10.4" viewBox="0 0 12.2 10.4"><path d="M0 2 H3.6 L4.6 0 H12.2 V10.4 H0 Z" fill="#dcb67a"/><rect x="5.6" y="1.1" width="5.6" height="0.8" fill="#fff6e4"/></svg>
<span class="t" style='left:561.28px;top:316px;font-family:"Liberation Sans", sans-serif;font-size:12.1px;color:#0a0a0a;letter-spacing:-0.2px;transform:scaleX(0.93);transform-origin:0 0;'>System Tables</span>
<svg style="left:526.2px;top:329.8px" width="8.6" height="8.6" viewBox="0 0 8.6 8.6"><rect x="0.5" y="0.5" width="7.6" height="7.6" rx="1.3" fill="#f4f4f4" stroke="#9c9c9c" stroke-width="1"/><rect x="1.9" y="3.75" width="4.8" height="1.1" fill="#3d5ca8"/><rect x="3.75" y="1.9" width="1.1" height="4.8" fill="#3d5ca8"/></svg>
<svg style="left:542.3px;top:327.2px" width="12.2" height="10.4" viewBox="0 0 12.2 10.4"><path d="M0 2 H3.6 L4.6 0 H12.2 V10.4 H0 Z" fill="#dcb67a"/><rect x="5.6" y="1.1" width="5.6" height="0.8" fill="#fff6e4"/></svg>
<span class="t" style='left:561.28px;top:333px;font-family:"Liberation Sans", sans-serif;font-size:12.1px;color:#0a0a0a;letter-spacing:-0.23px;transform:scaleX(0.93);transform-origin:0 0;'>FileTables</span>
<svg style="left:526.2px;top:347.04px" width="8.6" height="8.6" viewBox="0 0 8.6 8.6"><rect x="0.5" y="0.5" width="7.6" height="7.6" rx="1.3" fill="#f4f4f4" stroke="#9c9c9c" stroke-width="1"/><rect x="1.9" y="3.75" width="4.8" height="1.1" fill="#3d5ca8"/><rect x="3.75" y="1.9" width="1.1" height="4.8" fill="#3d5ca8"/></svg>
<svg style="left:542.3px;top:344.44px" width="12.2" height="10.4" viewBox="0 0 12.2 10.4"><path d="M0 2 H3.6 L4.6 0 H12.2 V10.4 H0 Z" fill="#dcb67a"/><rect x="5.6" y="1.1" width="5.6" height="0.8" fill="#fff6e4"/></svg>
<span class="t" style='left:561.28px;top:351px;font-family:"Liberation Sans", sans-serif;font-size:12.1px;color:#0a0a0a;letter-spacing:-0.23px;transform:scaleX(0.93);transform-origin:0 0;'>External Tables</span>
<svg style="left:526.2px;top:364.27px" width="8.6" height="8.6" viewBox="0 0 8.6 8.6"><rect x="0.5" y="0.5" width="7.6" height="7.6" rx="1.3" fill="#f4f4f4" stroke="#9c9c9c" stroke-width="1"/><rect x="1.9" y="3.75" width="4.8" height="1.1" fill="#3d5ca8"/><rect x="3.75" y="1.9" width="1.1" height="4.8" fill="#3d5ca8"/></svg>
<svg style="left:542.3px;top:361.68px" width="12.2" height="10.4" viewBox="0 0 12.2 10.4"><path d="M0 2 H3.6 L4.6 0 H12.2 V10.4 H0 Z" fill="#dcb67a"/><rect x="5.6" y="1.1" width="5.6" height="0.8" fill="#fff6e4"/></svg>
<span class="t" style='left:561.28px;top:368px;font-family:"Liberation Sans", sans-serif;font-size:12.1px;color:#0a0a0a;letter-spacing:-0.17px;transform:scaleX(0.93);transform-origin:0 0;'>Graph Tables</span>
<svg style="left:526.2px;top:381.51px" width="8.6" height="8.6" viewBox="0 0 8.6 8.6"><rect x="0.5" y="0.5" width="7.6" height="7.6" rx="1.3" fill="#f4f4f4" stroke="#9c9c9c" stroke-width="1"/><rect x="1.9" y="3.75" width="4.8" height="1.1" fill="#3d5ca8"/><rect x="3.75" y="1.9" width="1.1" height="4.8" fill="#3d5ca8"/></svg>
<svg style="left:542.3px;top:378.91px" width="12.7" height="11" viewBox="0 0 12.7 11"><rect x="0" y="0" width="12.7" height="11" fill="#3c3c3c"/><rect x="1.2" y="3.1" width="2.7" height="1.6" fill="#fff"/><rect x="4.9" y="3.1" width="2.7" height="1.6" fill="#fff"/><rect x="8.6" y="3.1" width="2.7" height="1.6" fill="#fff"/><rect x="1.2" y="5.8" width="2.7" height="1.6" fill="#fff"/><rect x="4.9" y="5.8" width="2.7" height="1.6" fill="#fff"/><rect x="8.6" y="5.8" width="2.7" height="1.6" fill="#fff"/><rect x="1.2" y="8.5" width="2.7" height="1.6" fill="#fff"/><rect x="4.9" y="8.5" width="2.7" height="1.6" fill="#fff"/><rect x="8.6" y="8.5" width="2.7" height="1.6" fill="#fff"/></svg>
<span class="t" style='left:561.28px;top:385px;font-family:"Liberation Sans", sans-serif;font-size:12.1px;color:#0a0a0a;letter-spacing:0.02px;transform:scaleX(0.93);transform-origin:0 0;'>dbo.AdventureWorksDWBuildVersio</span>
<svg style="left:526.2px;top:398.74px" width="8.6" height="8.6" viewBox="0 0 8.6 8.6"><rect x="0.5" y="0.5" width="7.6" height="7.6" rx="1.3" fill="#f4f4f4" stroke="#9c9c9c" stroke-width="1"/><rect x="1.9" y="3.75" width="4.8" height="1.1" fill="#3d5ca8"/><rect x="3.75" y="1.9" width="1.1" height="4.8" fill="#3d5ca8"/></svg>
<svg style="left:542.3px;top:396.14px" width="12.7" height="11" viewBox="0 0 12.7 11"><rect x="0" y="0" width="12.7" height="11" fill="#3c3c3c"/><rect x="1.2" y="3.1" width="2.7" height="1.6" fill="#fff"/><rect x="4.9" y="3.1" width="2.7" height="1.6" fill="#fff"/><rect x="8.6" y="3.1" width="2.7" height="1.6" fill="#fff"/><rect x="1.2" y="5.8" width="2.7" height="1.6" fill="#fff"/><rect x="4.9" y="5.8" width="2.7" height="1.6" fill="#fff"/><rect x="8.6" y="5.8" width="2.7" height="1.6" fill="#fff"/><rect x="1.2" y="8.5" width="2.7" height="1.6" fill="#fff"/><rect x="4.9" y="8.5" width="2.7" height="1.6" fill="#fff"/><rect x="8.6" y="8.5" width="2.7" height="1.6" fill="#fff"/></svg>
<span class="t" style='left:561.28px;top:402px;font-family:"Liberation Sans", sans-serif;font-size:12.1px;color:#0a0a0a;letter-spacing:-0.14px;transform:scaleX(0.93);transform-origin:0 0;'>dbo.DatabaseLog</span>
<svg style="left:526.2px;top:415.98px" width="8.6" height="8.6" viewBox="0 0 8.6 8.6"><rect x="0.5" y="0.5" width="7.6" height="7.6" rx="1.3" fill="#f4f4f4" stroke="#9c9c9c" stroke-width="1"/><rect x="1.9" y="3.75" width="4.8" height="1.1" fill="#3d5ca8"/><rect x="3.75" y="1.9" width="1.1" height="4.8" fill="#3d5ca8"/></svg>
<svg style="left:542.3px;top:413.38px" width="12.7" height="11" viewBox="0 0 12.7 11"><rect x="0" y="0" width="12.7" height="11" fill="#3c3c3c"/><rect x="1.2" y="3.1" width="2.7" height="1.6" fill="#fff"/><rect x="4.9" y="3.1" width="2.7" height="1.6" fill="#fff"/><rect x="8.6" y="3.1" width="2.7" height="1.6" fill="#fff"/><rect x="1.2" y="5.8" width="2.7" height="1.6" fill="#fff"/><rect x="4.9" y="5.8" width="2.7" height="1.6" fill="#fff"/><rect x="8.6" y="5.8" width="2.7" height="1.6" fill="#fff"/><rect x="1.2" y="8.5" width="2.7" height="1.6" fill="#fff"/><rect x="4.9" y="8.5" width="2.7" height="1.6" fill="#fff"/><rect x="8.6" y="8.5" width="2.7" height="1.6" fill="#fff"/></svg>
<span class="t" style='left:561.28px;top:419px;font-family:"Liberation Sans", sans-serif;font-size:12.1px;color:#0a0a0a;letter-spacing:0.31px;transform:scaleX(0.93);transform-origin:0 0;'>dbo.DimAccount</span>
<svg style="left:526.2px;top:433.21px" width="8.6" height="8.6" viewBox="0 0 8.6 8.6"><rect x="0.5" y="0.5" width="7.6" height="7.6" rx="1.3" fill="#f4f4f4" stroke="#9c9c9c" stroke-width="1"/><rect x="1.9" y="3.75" width="4.8" height="1.1" fill="#3d5ca8"/><rect x="3.75" y="1.9" width="1.1" height="4.8" fill="#3d5ca8"/></svg>
<svg style="left:542.3px;top:430.62px" width="12.7" height="11" viewBox="0 0 12.7 11"><rect x="0" y="0" width="12.7" height="11" fill="#3c3c3c"/><rect x="1.2" y="3.1" width="2.7" height="1.6" fill="#fff"/><rect x="4.9" y="3.1" width="2.7" height="1.6" fill="#fff"/><rect x="8.6" y="3.1" width="2.7" height="1.6" fill="#fff"/><rect x="1.2" y="5.8" width="2.7" height="1.6" fill="#fff"/><rect x="4.9" y="5.8" width="2.7" height="1.6" fill="#fff"/><rect x="8.6" y="5.8" width="2.7" height="1.6" fill="#fff"/><rect x="1.2" y="8.5" width="2.7" height="1.6" fill="#fff"/><rect x="4.9" y="8.5" width="2.7" height="1.6" fill="#fff"/><rect x="8.6" y="8.5" width="2.7" height="1.6" fill="#fff"/></svg>
<div style="left:558.98px;top:428.41px;width:93.8px;height:17px;background:#0078d7;outline:1px dotted #d9924f;outline-offset:-1px;"></div>
<span class="t" style='left:561.28px;top:437px;font-family:"Liberation Sans", sans-serif;font-size:12.1px;color:#fff;letter-spacing:0.15px;transform:scaleX(0.93);transform-origin:0 0;'>dbo.DimCurrency</span>
<svg style="left:526.2px;top:450.45px" width="8.6" height="8.6" viewBox="0 0 8.6 8.6"><rect x="0.5" y="0.5" width="7.6" height="7.6" rx="1.3" fill="#f4f4f4" stroke="#9c9c9c" stroke-width="1"/><rect x="1.9" y="3.75" width="4.8" height="1.1" fill="#3d5ca8"/><rect x="3.75" y="1.9" width="1.1" height="4.8" fill="#3d5ca8"/></svg>
<svg style="left:542.3px;top:447.85px" width="12.7" height="11" viewBox="0 0 12.7 11"><rect x="0" y="0" width="12.7" height="11" fill="#3c3c3c"/><rect x="1.2" y="3.1" width="2.7" height="1.6" fill="#fff"/><rect x="4.9" y="3.1" width="2.7" height="1.6" fill="#fff"/><rect x="8.6" y="3.1" width="2.7" height="1.6" fill="#fff"/><rect x="1.2" y="5.8" width="2.7" height="1.6" fill="#fff"/><rect x="4.9" y="5.8" width="2.7" height="1.6" fill="#fff"/><rect x="8.6" y="5.8" width="2.7" height="1.6" fill="#fff"/><rect x="1.2" y="8.5" width="2.7" height="1.6" fill="#fff"/><rect x="4.9" y="8.5" width="2.7" height="1.6" fill="#fff"/><rect x="8.6" y="8.5" width="2.7" height="1.6" fill="#fff"/></svg>
<span class="t" style='left:561.28px;top:454px;font-family:"Liberation Sans", sans-serif;font-size:12.1px;color:#0a0a0a;letter-spacing:0.18px;transform:scaleX(0.93);transform-origin:0 0;'>dbo.DimCustomer</span>
<svg style="left:526.2px;top:467.68px" width="8.6" height="8.6" viewBox="0 0 8.6 8.6"><rect x="0.5" y="0.5" width="7.6" height="7.6" rx="1.3" fill="#f4f4f4" stroke="#9c9c9c" stroke-width="1"/><rect x="1.9" y="3.75" width="4.8" height="1.1" fill="#3d5ca8"/><rect x="3.75" y="1.9" width="1.1" height="4.8" fill="#3d5ca8"/></svg>
<svg style="left:542.3px;top:465.08px" width="12.7" height="11" viewBox="0 0 12.7 11"><rect x="0" y="0" width="12.7" height="11" fill="#3c3c3c"/><rect x="1.2" y="3.1" width="2.7" height="1.6" fill="#fff"/><rect x="4.9" y="3.1" width="2.7" height="1.6" fill="#fff"/><rect x="8.6" y="3.1" width="2.7" height="1.6" fill="#fff"/><rect x="1.2" y="5.8" width="2.7" height="1.6" fill="#fff"/><rect x="4.9" y="5.8" width="2.7" height="1.6" fill="#fff"/><rect x="8.6" y="5.8" width="2.7" height="1.6" fill="#fff"/><rect x="1.2" y="8.5" width="2.7" height="1.6" fill="#fff"/><rect x="4.9" y="8.5" width="2.7" height="1.6" fill="#fff"/><rect x="8.6" y="8.5" width="2.7" height="1.6" fill="#fff"/></svg>
<span class="t" style='left:561.28px;top:471px;font-family:"Liberation Sans", sans-serif;font-size:12.1px;color:#0a0a0a;letter-spacing:0.06px;transform:scaleX(0.93);transform-origin:0 0;'>dbo.DimDate</span>
<div style="left:767px;top:225px;width:256px;height:18px;background:#4d6082;"></div>
<div style="left:767px;top:242.6px;width:433px;height:2px;background:#4d6082;"></div>
<span class="t" style='left:770.4px;top:235px;font-family:"Liberation Sans", sans-serif;font-size:12.1px;color:#fff;letter-spacing:-0.25px;transform:scaleX(0.93);transform-origin:0 0;'>SQLQuery1.sql - PE...(PETE-PC\pete (58))*</span>
<svg style="left:990.6px;top:231.2px" width="8.6" height="6.8" viewBox="0 0 8.6 6.8"><path d="M0 3.4 H3.2 M3.2 0.4 V6.4 M3.2 1.6 H8 V5.2 H3.2" fill="none" stroke="#d6dbe6" stroke-width="1"/><rect x="3.2" y="4.2" width="4.8" height="1.2" fill="#d6dbe6"/></svg>
<svg style="left:1008.2px;top:230.2px" width="9.2" height="8.6" viewBox="0 0 9.2 8.6"><path d="M0.5 0.5 L8.7 8.1 M8.7 0.5 L0.5 8.1" stroke="#d6dbe6" stroke-width="1.2" fill="none"/></svg>
<div style="left:767px;top:244.6px;width:433px;height:78.4px;background:#fff;"></div>
<div style="left:767px;top:244.6px;width:17px;height:78.4px;background:#e6e7e8;"></div>
<div style="left:786.4px;top:244.6px;width:5px;height:78.4px;background:#ffee62;"></div>
<span class="t" style='left:803.6px;top:254px;font-family:"Liberation Mono", monospace;font-size:12px;transform:scale(0.9319,1);transform-origin:0 0;'><span style="color:#0000ff">USE</span><span style="color:#000"> [Adventureworks]</span></span>
<span class="t" style='left:803.6px;top:269px;font-family:"Liberation Mono", monospace;font-size:12px;transform:scale(0.9319,1);transform-origin:0 0;'><span style="color:#0000ff">GO</span></span>
<span class="t" style='left:803.6px;top:300px;font-family:"Liberation Mono", monospace;font-size:12px;transform:scale(0.9319,1);transform-origin:0 0;'><span style="color:#0000ff">ALTER</span><span style="color:#000"> </span><span style="color:#0000ff">SCHEMA</span><span style="color:#000"> finance </span><span style="color:#0000ff">TRANSFER</span><span style="color:#000"> [dbo]</span><span style="color:#808080">.</span><span style="color:#000">[DimCurrency]</span></span>
<div style="left:797.6px;top:303.06px;width:1px;height:19.94px;background:#a5a5a5;"></div>
<svg style="left:793.4px;top:294.86px" width="8.6" height="8.6" viewBox="0 0 8.6 8.6"><rect x="0.5" y="0.5" width="7.6" height="7.6" fill="#fff" stroke="#a5a5a5"/><rect x="2" y="3.8" width="4.6" height="1" fill="#444"/></svg>
<div style="left:767px;top:323px;width:433px;height:15.6px;background:#e8e8ec;"></div>
<div style="left:767px;top:323px;width:57px;height:15.2px;background:#fff;border:1px solid #c3cde0;box-sizing:border-box;"></div>
<span class="t" style='left:770.2px;top:332px;font-family:"Liberation Sans", sans-serif;font-size:11px;color:#1e1e1e;letter-spacing:-0.4px;'>100 %</span>
<svg style="left:816.6px;top:330px" width="5.2" height="3" viewBox="0 0 5.2 3"><path d="M0 0 H5.2 L2.6 3 Z" fill="#1e1e1e"/></svg>
<svg style="left:831px;top:327.2px" width="4.6" height="7.2" viewBox="0 0 4.6 7.2"><path d="M4.6 0 V7.2 L0 3.6 Z" fill="#c2c8d4"/></svg>
<div style="left:767px;top:338.6px;width:433px;height:25.4px;background:#f0f0f0;"></div>
<div style="left:767px;top:363.4px;width:433px;height:1px;background:#e2e2e2;"></div>
<div style="left:767px;top:364.4px;width:433px;height:167.6px;background:#fff;"></div>
<div style="left:768px;top:343.2px;width:70px;height:21.2px;background:#fff;border:1px solid #dcdcdc;border-bottom:none;box-sizing:border-box;"></div>
<svg style="left:776px;top:345px" width="15" height="14" viewBox="0 0 15 14"><rect x="8" y="0" width="6" height="11" fill="#484848"/><rect x="9" y="1" width="4" height="1" fill="#c4c4c4"/><rect x="9" y="3" width="4" height="1" fill="#c4c4c4"/><rect x="12" y="8" width="1" height="1.4" fill="#f0f0f0"/><path d="M0.5 4.5 H6.3 L8.5 6.7 V13.5 H0.5 Z" fill="#fff" stroke="#484848" stroke-width="1"/><path d="M2 7.5 H7 M2 9.5 H7 M2 11.5 H7" stroke="#484848" stroke-width="1"/></svg>
<span class="t" style='left:796.8px;top:354px;font-family:"Liberation Sans", sans-serif;font-size:11.2px;color:#1e1e1e;letter-spacing:-0.82px;'>Results</span>
<span class="t" style='left:792.2px;top:373px;font-family:"Liberation Mono", monospace;font-size:11.15px;color:#383838;'>Commands completed successfully.</span>
<div style="left:287px;top:528.4px;width:913px;height:313.6px;background:#293955;"></div>
<div style="left:290px;top:534px;width:348px;height:308px;background:#8e9bbc;"></div>
<div style="left:291px;top:534px;width:346px;height:20px;background:#fff29d;"></div>
<span class="t" style='left:295.4px;top:544px;font-family:"Liberation Sans", sans-serif;font-size:12.1px;color:#1e1e1e;letter-spacing:-0.09px;transform:scaleX(0.93);transform-origin:0 0;'>Object Explorer</span>
<svg style="left:591.7px;top:541.5px" width="6.8" height="4" viewBox="0 0 6.8 4"><path d="M0 0 H6.8 L3.4 3.8 Z" fill="#75633d"/></svg>
<svg style="left:607.4px;top:538.3px" width="6.6" height="11.2" viewBox="0 0 6.6 11.2"><path d="M1.4 0.5 H5.2 V6 M1.4 0.5 V6 M0 6.2 H6.6 M3.3 6.2 V11" fill="none" stroke="#75633d" stroke-width="1"/><rect x="4" y="0.5" width="1.2" height="5.6" fill="#75633d"/></svg>
<svg style="left:621.8px;top:539.1px" width="8.6" height="7.8" viewBox="0 0 8.6 7.8"><path d="M0.5 0.4 L8.1 7.4 M8.1 0.4 L0.5 7.4" stroke="#75633d" stroke-width="1.25" fill="none"/></svg>
<div style="left:291px;top:554px;width:346px;height:25px;background:#cfd6e5;"></div>
<span class="t" style='left:298.3px;top:567px;font-family:"Liberation Sans", sans-serif;font-size:12.1px;color:#2a3b5a;letter-spacing:0.16px;transform:scaleX(0.93);transform-origin:0 0;'>Connect</span>
<svg style="left:345.1px;top:565px" width="4.6" height="2.8" viewBox="0 0 4.6 2.8"><path d="M0 0 H4.6 L2.3 2.7 Z" fill="#1e1e1e"/></svg>
<svg style="left:361.5px;top:559.8px" width="8" height="13.2" viewBox="0 0 8 13.2"><rect x="1.3" y="0" width="1.5" height="3.6" fill="#3b3b3b"/><rect x="5.1" y="0" width="1.5" height="3.6" fill="#3b3b3b"/><rect x="0" y="3.4" width="8" height="1.5" fill="#3b3b3b"/><path d="M0.9 4.9 H7.1 V7.4 L6 8.3 H2 L0.9 7.4 Z" fill="#3b3b3b"/><rect x="3.1" y="8" width="1.8" height="5.2" fill="#3b3b3b"/></svg>
<svg style="left:379.5px;top:559.4px" width="6" height="6.6" viewBox="0 0 6 6.6"><path d="M0.6 0.6 L5.4 6 M5.4 0.6 L0.6 6" stroke="#ecd9c3" stroke-width="2.3" fill="none"/><path d="M0.6 0.6 L5.4 6 M5.4 0.6 L0.6 6" stroke="#9c2b1e" stroke-width="1.05" fill="none"/></svg>
<svg style="left:385.7px;top:559.8px" width="8" height="13.2" viewBox="0 0 8 13.2"><rect x="1.3" y="0" width="1.5" height="3.6" fill="#3b3b3b"/><rect x="5.1" y="0" width="1.5" height="3.6" fill="#3b3b3b"/><rect x="0" y="3.4" width="8" height="1.5" fill="#3b3b3b"/><path d="M0.9 4.9 H7.1 V7.4 L6 8.3 H2 L0.9 7.4 Z" fill="#3b3b3b"/><rect x="3.1" y="8" width="1.8" height="5.2" fill="#3b3b3b"/></svg>
<div style="left:403.7px;top:562.4px;width:7.4px;height:7.4px;background:#a5adbe;"></div>
<svg style="left:422.7px;top:560.9px" width="11.4" height="12" viewBox="0 0 11.4 12"><path d="M0 0 H11.4 L6.7 5.2 V12 H4.7 V5.2 Z" fill="#a3abbc"/></svg>
<svg style="left:443px;top:558.9px" width="13" height="14.6" viewBox="0 0 13 14.6"><path d="M6.3 3.4 A5 5 0 1 0 11.2 7.6" fill="none" stroke="#17529c" stroke-width="2.3"/><path d="M6 0 L10.6 3.2 L6 6.6 Z" fill="#17529c"/></svg>
<svg style="left:463.7px;top:561.3px" width="13.8" height="10.4" viewBox="0 0 13.8 10.4"><path d="M0 6.6 H3.6 L4.9 4.6 L6 8.2 L7.6 0.6 L9.3 9.8 L10.6 4.8 L11.4 6.6 H13.8" fill="none" stroke="#2e2e2e" stroke-width="1.1" stroke-linejoin="round"/></svg>
<div style="left:291px;top:579px;width:346px;height:263px;background:#8a8f9b;"></div>
<div style="left:292px;top:580px;width:344px;height:262px;background:#fff;"></div>
<div style="left:619px;top:581px;width:16px;height:261px;background:#e8e8ec;"></div>
<svg style="left:622.6px;top:586.6px" width="8.4" height="5" viewBox="0 0 8.4 5"><path d="M0 5 L4.2 0 L8.4 5 Z" fill="#868999"/></svg>
<svg style="left:373.2px;top:586.9px" width="8.6" height="8.6" viewBox="0 0 8.6 8.6"><rect x="0.5" y="0.5" width="7.6" height="7.6" rx="1.3" fill="#f4f4f4" stroke="#9c9c9c" stroke-width="1"/><rect x="1.9" y="3.75" width="4.8" height="1.1" fill="#3d5ca8"/><rect x="3.75" y="1.9" width="1.1" height="4.8" fill="#3d5ca8"/></svg>
<svg style="left:389.3px;top:584.3px" width="12.7" height="11" viewBox="0 0 12.7 11"><rect x="0" y="0" width="12.7" height="11" fill="#3c3c3c"/><rect x="1.2" y="3.1" width="2.7" height="1.6" fill="#fff"/><rect x="4.9" y="3.1" width="2.7" height="1.6" fill="#fff"/><rect x="8.6" y="3.1" width="2.7" height="1.6" fill="#fff"/><rect x="1.2" y="5.8" width="2.7" height="1.6" fill="#fff"/><rect x="4.9" y="5.8" width="2.7" height="1.6" fill="#fff"/><rect x="8.6" y="5.8" width="2.7" height="1.6" fill="#fff"/><rect x="1.2" y="8.5" width="2.7" height="1.6" fill="#fff"/><rect x="4.9" y="8.5" width="2.7" height="1.6" fill="#fff"/><rect x="8.6" y="8.5" width="2.7" height="1.6" fill="#fff"/></svg>
<span class="t" style='left:407.88px;top:590px;font-family:"Liberation Sans", sans-serif;font-size:12.1px;color:#0a0a0a;letter-spacing:-0.19px;transform:scaleX(0.93);transform-origin:0 0;'>dbo.FactSalesQuota</span>
<svg style="left:373.2px;top:604.13px" width="8.6" height="8.6" viewBox="0 0 8.6 8.6"><rect x="0.5" y="0.5" width="7.6" height="7.6" rx="1.3" fill="#f4f4f4" stroke="#9c9c9c" stroke-width="1"/><rect x="1.9" y="3.75" width="4.8" height="1.1" fill="#3d5ca8"/><rect x="3.75" y="1.9" width="1.1" height="4.8" fill="#3d5ca8"/></svg>
<svg style="left:389.3px;top:601.53px" width="12.7" height="11" viewBox="0 0 12.7 11"><rect x="0" y="0" width="12.7" height="11" fill="#3c3c3c"/><rect x="1.2" y="3.1" width="2.7" height="1.6" fill="#fff"/><rect x="4.9" y="3.1" width="2.7" height="1.6" fill="#fff"/><rect x="8.6" y="3.1" width="2.7" height="1.6" fill="#fff"/><rect x="1.2" y="5.8" width="2.7" height="1.6" fill="#fff"/><rect x="4.9" y="5.8" width="2.7" height="1.6" fill="#fff"/><rect x="8.6" y="5.8" width="2.7" height="1.6" fill="#fff"/><rect x="1.2" y="8.5" width="2.7" height="1.6" fill="#fff"/><rect x="4.9" y="8.5" width="2.7" height="1.6" fill="#fff"/><rect x="8.6" y="8.5" width="2.7" height="1.6" fill="#fff"/></svg>
<span class="t" style='left:407.88px;top:608px;font-family:"Liberation Sans", sans-serif;font-size:12.1px;color:#0a0a0a;letter-spacing:-0.25px;transform:scaleX(0.93);transform-origin:0 0;'>dbo.FactSurveyResponse</span>
<svg style="left:373.2px;top:621.37px" width="8.6" height="8.6" viewBox="0 0 8.6 8.6"><rect x="0.5" y="0.5" width="7.6" height="7.6" rx="1.3" fill="#f4f4f4" stroke="#9c9c9c" stroke-width="1"/><rect x="1.9" y="3.75" width="4.8" height="1.1" fill="#3d5ca8"/><rect x="3.75" y="1.9" width="1.1" height="4.8" fill="#3d5ca8"/></svg>
<svg style="left:389.3px;top:618.77px" width="12.7" height="11" viewBox="0 0 12.7 11"><rect x="0" y="0" width="12.7" height="11" fill="#3c3c3c"/><rect x="1.2" y="3.1" width="2.7" height="1.6" fill="#fff"/><rect x="4.9" y="3.1" width="2.7" height="1.6" fill="#fff"/><rect x="8.6" y="3.1" width="2.7" height="1.6" fill="#fff"/><rect x="1.2" y="5.8" width="2.7" height="1.6" fill="#fff"/><rect x="4.9" y="5.8" width="2.7" height="1.6" fill="#fff"/><rect x="8.6" y="5.8" width="2.7" height="1.6" fill="#fff"/><rect x="1.2" y="8.5" width="2.7" height="1.6" fill="#fff"/><rect x="4.9" y="8.5" width="2.7" height="1.6" fill="#fff"/><rect x="8.6" y="8.5" width="2.7" height="1.6" fill="#fff"/></svg>
<span class="t" style='left:407.88px;top:625px;font-family:"Liberation Sans", sans-serif;font-size:12.1px;color:#0a0a0a;letter-spacing:-0.06px;transform:scaleX(0.93);transform-origin:0 0;'>dbo.NewFactCurrencyRate</span>
<svg style="left:373.2px;top:638.61px" width="8.6" height="8.6" viewBox="0 0 8.6 8.6"><rect x="0.5" y="0.5" width="7.6" height="7.6" rx="1.3" fill="#f4f4f4" stroke="#9c9c9c" stroke-width="1"/><rect x="1.9" y="3.75" width="4.8" height="1.1" fill="#3d5ca8"/><rect x="3.75" y="1.9" width="1.1" height="4.8" fill="#3d5ca8"/></svg>
<svg style="left:389.3px;top:636px" width="12.7" height="11" viewBox="0 0 12.7 11"><rect x="0" y="0" width="12.7" height="11" fill="#3c3c3c"/><rect x="1.2" y="3.1" width="2.7" height="1.6" fill="#fff"/><rect x="4.9" y="3.1" width="2.7" height="1.6" fill="#fff"/><rect x="8.6" y="3.1" width="2.7" height="1.6" fill="#fff"/><rect x="1.2" y="5.8" width="2.7" height="1.6" fill="#fff"/><rect x="4.9" y="5.8" width="2.7" height="1.6" fill="#fff"/><rect x="8.6" y="5.8" width="2.7" height="1.6" fill="#fff"/><rect x="1.2" y="8.5" width="2.7" height="1.6" fill="#fff"/><rect x="4.9" y="8.5" width="2.7" height="1.6" fill="#fff"/><rect x="8.6" y="8.5" width="2.7" height="1.6" fill="#fff"/></svg>
<span class="t" style='left:407.88px;top:642px;font-family:"Liberation Sans", sans-serif;font-size:12.1px;color:#0a0a0a;letter-spacing:-0.03px;transform:scaleX(0.93);transform-origin:0 0;'>dbo.ProspectiveBuyer</span>
<svg style="left:373.2px;top:655.84px" width="8.6" height="8.6" viewBox="0 0 8.6 8.6"><rect x="0.5" y="0.5" width="7.6" height="7.6" rx="1.3" fill="#f4f4f4" stroke="#9c9c9c" stroke-width="1"/><rect x="1.9" y="3.75" width="4.8" height="1.1" fill="#3d5ca8"/><rect x="3.75" y="1.9" width="1.1" height="4.8" fill="#3d5ca8"/></svg>
<svg style="left:389.3px;top:653.24px" width="12.7" height="11" viewBox="0 0 12.7 11"><rect x="0" y="0" width="12.7" height="11" fill="#3c3c3c"/><rect x="1.2" y="3.1" width="2.7" height="1.6" fill="#fff"/><rect x="4.9" y="3.1" width="2.7" height="1.6" fill="#fff"/><rect x="8.6" y="3.1" width="2.7" height="1.6" fill="#fff"/><rect x="1.2" y="5.8" width="2.7" height="1.6" fill="#fff"/><rect x="4.9" y="5.8" width="2.7" height="1.6" fill="#fff"/><rect x="8.6" y="5.8" width="2.7" height="1.6" fill="#fff"/><rect x="1.2" y="8.5" width="2.7" height="1.6" fill="#fff"/><rect x="4.9" y="8.5" width="2.7" height="1.6" fill="#fff"/><rect x="8.6" y="8.5" width="2.7" height="1.6" fill="#fff"/></svg>
<div style="left:405.58px;top:651.04px;width:110.8px;height:17px;background:#0078d7;outline:1px dotted #d9924f;outline-offset:-1px;"></div>
<span class="t" style='left:407.88px;top:659px;font-family:"Liberation Sans", sans-serif;font-size:12.1px;color:#fff;letter-spacing:0.09px;transform:scaleX(0.93);transform-origin:0 0;'>finance.DimCurrency</span>
<svg style="left:354.95px;top:673.07px" width="8.6" height="8.6" viewBox="0 0 8.6 8.6"><rect x="0.5" y="0.5" width="7.6" height="7.6" rx="1.3" fill="#f4f4f4" stroke="#9c9c9c" stroke-width="1"/><rect x="1.9" y="3.75" width="4.8" height="1.1" fill="#3d5ca8"/><rect x="3.75" y="1.9" width="1.1" height="4.8" fill="#3d5ca8"/></svg>
<svg style="left:371.05px;top:670.47px" width="12.2" height="10.4" viewBox="0 0 12.2 10.4"><path d="M0 2 H3.6 L4.6 0 H12.2 V10.4 H0 Z" fill="#dcb67a"/><rect x="5.6" y="1.1" width="5.6" height="0.8" fill="#fff6e4"/></svg>
<span class="t" style='left:389.66px;top:677px;font-family:"Liberation Sans", sans-serif;font-size:12.1px;color:#0a0a0a;letter-spacing:-0.48px;transform:scaleX(0.93);transform-origin:0 0;'>Views</span>
<svg style="left:354.95px;top:690.31px" width="8.6" height="8.6" viewBox="0 0 8.6 8.6"><rect x="0.5" y="0.5" width="7.6" height="7.6" rx="1.3" fill="#f4f4f4" stroke="#9c9c9c" stroke-width="1"/><rect x="1.9" y="3.75" width="4.8" height="1.1" fill="#3d5ca8"/><rect x="3.75" y="1.9" width="1.1" height="4.8" fill="#3d5ca8"/></svg>
<svg style="left:371.05px;top:687.71px" width="12.2" height="10.4" viewBox="0 0 12.2 10.4"><path d="M0 2 H3.6 L4.6 0 H12.2 V10.4 H0 Z" fill="#dcb67a"/><rect x="5.6" y="1.1" width="5.6" height="0.8" fill="#fff6e4"/></svg>
<span class="t" style='left:389.66px;top:694px;font-family:"Liberation Sans", sans-serif;font-size:12.1px;color:#0a0a0a;letter-spacing:-0.36px;transform:scaleX(0.93);transform-origin:0 0;'>External Resources</span>
<svg style="left:354.95px;top:707.54px" width="8.6" height="8.6" viewBox="0 0 8.6 8.6"><rect x="0.5" y="0.5" width="7.6" height="7.6" rx="1.3" fill="#f4f4f4" stroke="#9c9c9c" stroke-width="1"/><rect x="1.9" y="3.75" width="4.8" height="1.1" fill="#3d5ca8"/><rect x="3.75" y="1.9" width="1.1" height="4.8" fill="#3d5ca8"/></svg>
<svg style="left:371.05px;top:704.94px" width="12.2" height="10.4" viewBox="0 0 12.2 10.4"><path d="M0 2 H3.6 L4.6 0 H12.2 V10.4 H0 Z" fill="#dcb67a"/><rect x="5.6" y="1.1" width="5.6" height="0.8" fill="#fff6e4"/></svg>
<span class="t" style='left:389.66px;top:711px;font-family:"Liberation Sans", sans-serif;font-size:12.1px;color:#0a0a0a;letter-spacing:-0.08px;transform:scaleX(0.93);transform-origin:0 0;'>Synonyms</span>
<svg style="left:354.95px;top:724.78px" width="8.6" height="8.6" viewBox="0 0 8.6 8.6"><rect x="0.5" y="0.5" width="7.6" height="7.6" rx="1.3" fill="#f4f4f4" stroke="#9c9c9c" stroke-width="1"/><rect x="1.9" y="3.75" width="4.8" height="1.1" fill="#3d5ca8"/><rect x="3.75" y="1.9" width="1.1" height="4.8" fill="#3d5ca8"/></svg>
<svg style="left:371.05px;top:722.18px" width="12.2" height="10.4" viewBox="0 0 12.2 10.4"><path d="M0 2 H3.6 L4.6 0 H12.2 V10.4 H0 Z" fill="#dcb67a"/><rect x="5.6" y="1.1" width="5.6" height="0.8" fill="#fff6e4"/></svg>
<span class="t" style='left:389.66px;top:728px;font-family:"Liberation Sans", sans-serif;font-size:12.1px;color:#0a0a0a;letter-spacing:0.28px;transform:scaleX(0.93);transform-origin:0 0;'>Programmability</span>
<svg style="left:354.95px;top:742.01px" width="8.6" height="8.6" viewBox="0 0 8.6 8.6"><rect x="0.5" y="0.5" width="7.6" height="7.6" rx="1.3" fill="#f4f4f4" stroke="#9c9c9c" stroke-width="1"/><rect x="1.9" y="3.75" width="4.8" height="1.1" fill="#3d5ca8"/><rect x="3.75" y="1.9" width="1.1" height="4.8" fill="#3d5ca8"/></svg>
<svg style="left:371.05px;top:739.41px" width="12.2" height="10.4" viewBox="0 0 12.2 10.4"><path d="M0 2 H3.6 L4.6 0 H12.2 V10.4 H0 Z" fill="#dcb67a"/><rect x="5.6" y="1.1" width="5.6" height="0.8" fill="#fff6e4"/></svg>
<span class="t" style='left:389.66px;top:746px;font-family:"Liberation Sans", sans-serif;font-size:12.1px;color:#0a0a0a;letter-spacing:-0.27px;transform:scaleX(0.93);transform-origin:0 0;'>Service Broker</span>
<svg style="left:354.95px;top:759.25px" width="8.6" height="8.6" viewBox="0 0 8.6 8.6"><rect x="0.5" y="0.5" width="7.6" height="7.6" rx="1.3" fill="#f4f4f4" stroke="#9c9c9c" stroke-width="1"/><rect x="1.9" y="3.75" width="4.8" height="1.1" fill="#3d5ca8"/><rect x="3.75" y="1.9" width="1.1" height="4.8" fill="#3d5ca8"/></svg>
<svg style="left:371.05px;top:756.65px" width="12.2" height="10.4" viewBox="0 0 12.2 10.4"><path d="M0 2 H3.6 L4.6 0 H12.2 V10.4 H0 Z" fill="#dcb67a"/><rect x="5.6" y="1.1" width="5.6" height="0.8" fill="#fff6e4"/></svg>
<span class="t" style='left:389.66px;top:763px;font-family:"Liberation Sans", sans-serif;font-size:12.1px;color:#0a0a0a;letter-spacing:-0.29px;transform:scaleX(0.93);transform-origin:0 0;'>Storage</span>
<svg style="left:354.95px;top:776.48px" width="8.6" height="8.6" viewBox="0 0 8.6 8.6"><rect x="0.5" y="0.5" width="7.6" height="7.6" rx="1.3" fill="#f4f4f4" stroke="#9c9c9c" stroke-width="1"/><rect x="1.9" y="3.75" width="4.8" height="1.1" fill="#3d5ca8"/><rect x="3.75" y="1.9" width="1.1" height="4.8" fill="#3d5ca8"/></svg>
<svg style="left:371.05px;top:773.88px" width="12.2" height="10.4" viewBox="0 0 12.2 10.4"><path d="M0 2 H3.6 L4.6 0 H12.2 V10.4 H0 Z" fill="#dcb67a"/><rect x="5.6" y="1.1" width="5.6" height="0.8" fill="#fff6e4"/></svg>
<span class="t" style='left:389.66px;top:780px;font-family:"Liberation Sans", sans-serif;font-size:12.1px;color:#0a0a0a;letter-spacing:-0.17px;transform:scaleX(0.93);transform-origin:0 0;'>Security</span>
<div style="left:645px;top:533px;width:256px;height:18px;background:#4d6082;"></div>
<div style="left:645px;top:550.6px;width:555px;height:2px;background:#4d6082;"></div>
<span class="t" style='left:648.4px;top:543px;font-family:"Liberation Sans", sans-serif;font-size:12.1px;color:#fff;letter-spacing:-0.25px;transform:scaleX(0.93);transform-origin:0 0;'>SQLQuery1.sql - PE...(PETE-PC\pete (58))*</span>
<svg style="left:868.6px;top:539.2px" width="8.6" height="6.8" viewBox="0 0 8.6 6.8"><path d="M0 3.4 H3.2 M3.2 0.4 V6.4 M3.2 1.6 H8 V5.2 H3.2" fill="none" stroke="#d6dbe6" stroke-width="1"/><rect x="3.2" y="4.2" width="4.8" height="1.2" fill="#d6dbe6"/></svg>
<svg style="left:886.2px;top:538.2px" width="9.2" height="8.6" viewBox="0 0 9.2 8.6"><path d="M0.5 0.5 L8.7 8.1 M8.7 0.5 L0.5 8.1" stroke="#d6dbe6" stroke-width="1.2" fill="none"/></svg>
<div style="left:645px;top:552.6px;width:555px;height:112px;background:#fff;"></div>
<div style="left:645px;top:552.6px;width:17px;height:112px;background:#e6e7e8;"></div>
<div style="left:664.4px;top:552.6px;width:5px;height:112px;background:#ffee62;"></div>
<span class="t" style='left:681.6px;top:562px;font-family:"Liberation Mono", monospace;font-size:12px;transform:scale(0.9319,1);transform-origin:0 0;'><span style="color:#0000ff">USE</span><span style="color:#000"> [Adventureworks]</span></span>
<span class="t" style='left:681.6px;top:577px;font-family:"Liberation Mono", monospace;font-size:12px;transform:scale(0.9319,1);transform-origin:0 0;'><span style="color:#0000ff">GO</span></span>
<span class="t" style='left:681.6px;top:608px;font-family:"Liberation Mono", monospace;font-size:12px;transform:scale(0.9319,1);transform-origin:0 0;'><span style="color:#008000">--ALTER SCHEMA finance TRANSFER [dbo].[DimCurrency]</span></span>
<span class="t" style='left:681.6px;top:639px;font-family:"Liberation Mono", monospace;font-size:12px;transform:scale(0.9319,1);transform-origin:0 0;'><span style="color:#0000ff">SELECT</span><span style="color:#000"> </span><span style="color:#0000ff">TOP</span><span style="color:#000"> 1 </span><span style="color:#0000ff">PERCENT</span><span style="color:#000"> </span><span style="color:#808080">*</span><span style="color:#000"> </span><span style="color:#0000ff">FROM</span><span style="color:#000"> [finance]</span><span style="color:#808080">.</span><span style="color:#000">[DimCurrency] </span><span style="color:#0000ff">ORDER</span><span style="color:#000"> </span><span style="color:#0000ff">BY</span><span style="color:#000"> </span><span style="color:#ff00ff">NEWID</span><span style="color:#808080">()</span></span>
<div style="left:675.6px;top:641.8px;width:1px;height:22.8px;background:#a5a5a5;"></div>
<svg style="left:671.4px;top:633.6px" width="8.6" height="8.6" viewBox="0 0 8.6 8.6"><rect x="0.5" y="0.5" width="7.6" height="7.6" fill="#fff" stroke="#a5a5a5"/><rect x="2" y="3.8" width="4.6" height="1" fill="#444"/></svg>
<div style="left:645px;top:664.6px;width:555px;height:15.6px;background:#e8e8ec;"></div>
<div style="left:645px;top:664.6px;width:57px;height:15.2px;background:#fff;border:1px solid #c3cde0;box-sizing:border-box;"></div>
<span class="t" style='left:648.2px;top:674px;font-family:"Liberation Sans", sans-serif;font-size:11px;color:#1e1e1e;letter-spacing:-0.4px;'>100 %</span>
<svg style="left:694.6px;top:671.6px" width="5.2" height="3" viewBox="0 0 5.2 3"><path d="M0 0 H5.2 L2.6 3 Z" fill="#1e1e1e"/></svg>
<svg style="left:709px;top:668.8px" width="4.6" height="7.2" viewBox="0 0 4.6 7.2"><path d="M4.6 0 V7.2 L0 3.6 Z" fill="#c2c8d4"/></svg>
<div style="left:645px;top:680.2px;width:555px;height:25.4px;background:#f0f0f0;"></div>
<div style="left:645px;top:705px;width:555px;height:1px;background:#e2e2e2;"></div>
<div style="left:645px;top:706px;width:555px;height:136px;background:#fff;"></div>
<div style="left:646px;top:684.8px;width:68px;height:21.2px;background:#fff;border:1px solid #dcdcdc;border-bottom:none;box-sizing:border-box;"></div>
<svg style="left:654.4px;top:689px" width="12.7" height="11" viewBox="0 0 12.7 11"><rect x="0" y="0" width="12.7" height="11" fill="#3c3c3c"/><rect x="1.2" y="3.1" width="2.7" height="1.6" fill="#fff"/><rect x="4.9" y="3.1" width="2.7" height="1.6" fill="#fff"/><rect x="8.6" y="3.1" width="2.7" height="1.6" fill="#fff"/><rect x="1.2" y="5.8" width="2.7" height="1.6" fill="#fff"/><rect x="4.9" y="5.8" width="2.7" height="1.6" fill="#fff"/><rect x="8.6" y="5.8" width="2.7" height="1.6" fill="#fff"/><rect x="1.2" y="8.5" width="2.7" height="1.6" fill="#fff"/><rect x="4.9" y="8.5" width="2.7" height="1.6" fill="#fff"/><rect x="8.6" y="8.5" width="2.7" height="1.6" fill="#fff"/></svg>
<span class="t" style='left:674px;top:696px;font-family:"Liberation Sans", sans-serif;font-size:11.2px;color:#1e1e1e;letter-spacing:-0.82px;'>Results</span>
<div style="left:714px;top:687.2px;width:75px;height:17.4px;background:#f0f0f0;border:1px solid #d9d9d9;box-sizing:border-box;"></div>
<svg style="left:720px;top:689px" width="15" height="14" viewBox="0 0 15 14"><rect x="8" y="0" width="6" height="11" fill="#484848"/><rect x="9" y="1" width="4" height="1" fill="#c4c4c4"/><rect x="9" y="3" width="4" height="1" fill="#c4c4c4"/><rect x="12" y="8" width="1" height="1.4" fill="#f0f0f0"/><path d="M0.5 4.5 H6.3 L8.5 6.7 V13.5 H0.5 Z" fill="#fff" stroke="#484848" stroke-width="1"/><path d="M2 7.5 H7 M2 9.5 H7 M2 11.5 H7" stroke="#484848" stroke-width="1"/></svg>
<span class="t" style='left:740.2px;top:697px;font-family:"Liberation Sans", sans-serif;font-size:11.2px;color:#1e1e1e;letter-spacing:-0.86px;'>Messages</span>
<svg style="left:870px;top:643.2px" width="152.5" height="3.4" viewBox="0 0 152.5 3.4"><path d="M0 1.6 L2 0.3 L4 2.9 L6 0.3 L8 2.9 L10 0.3 L12 2.9 L14 0.3 L16 2.9 L18 0.3 L20 2.9 L22 0.3 L24 2.9 L26 0.3 L28 2.9 L30 0.3 L32 2.9 L34 0.3 L36 2.9 L38 0.3 L40 2.9 L42 0.3 L44 2.9 L46 0.3 L48 2.9 L50 0.3 L52 2.9 L54 0.3 L56 2.9 L58 0.3 L60 2.9 L62 0.3 L64 2.9 L66 0.3 L68 2.9 L70 0.3 L72 2.9 L74 0.3 L76 2.9 L78 0.3 L80 2.9 L82 0.3 L84 2.9 L86 0.3 L88 2.9 L90 0.3 L92 2.9 L94 0.3 L96 2.9 L98 0.3 L100 2.9 L102 0.3 L104 2.9 L106 0.3 L108 2.9 L110 0.3 L112 2.9 L114 0.3 L116 2.9 L118 0.3 L120 2.9 L122 0.3 L124 2.9 L126 0.3 L128 2.9 L130 0.3 L132 2.9 L134 0.3 L136 2.9 L138 0.3 L140 2.9 L142 0.3 L144 2.9 L146 0.3 L148 2.9 L150 0.3 L152 2.9 L154 0.3" fill="none" stroke="#ee5f4a" stroke-width="1"/></svg>
<div style="left:649px;top:707px;width:551px;height:1px;background:#a6a6a6;"></div>
<div style="left:649px;top:707px;width:1px;height:135px;background:#8f8f8f;"></div>
<div style="left:680px;top:708px;width:282.3px;height:17.5px;background:#fbfbfb;"></div>
<div style="left:650px;top:725px;width:312.8px;height:1px;background:#ececec;"></div>
<div style="left:650px;top:743.1px;width:312.8px;height:1px;background:#ececec;"></div>
<div style="left:650px;top:761.5px;width:312.8px;height:1px;background:#ececec;"></div>
<div style="left:679.5px;top:708px;width:1px;height:54px;background:#ececec;"></div>
<div style="left:753px;top:708px;width:1px;height:54px;background:#ececec;"></div>
<div style="left:866px;top:708px;width:1px;height:54px;background:#ececec;"></div>
<div style="left:961.8px;top:708px;width:1px;height:54px;background:#ececec;"></div>
<div style="left:680px;top:725.5px;width:74px;height:18.6px;background:#e9edf3;outline:1px dotted #222;outline-offset:-1px;"></div>
<span class="t" style='left:685px;top:717px;font-family:"Liberation Sans", sans-serif;font-size:10.6px;color:#1e1e1e;letter-spacing:-0.39px;'>CurrencyKey</span>
<span class="t" style='left:759px;top:717px;font-family:"Liberation Sans", sans-serif;font-size:10.6px;color:#1e1e1e;letter-spacing:-0.35px;'>CurrencyAlternateKey</span>
<span class="t" style='left:872px;top:717px;font-family:"Liberation Sans", sans-serif;font-size:10.6px;color:#1e1e1e;letter-spacing:-0.43px;'>CurrencyName</span>
<span class="t" style='left:656.2px;top:735px;font-family:"Liberation Sans", sans-serif;font-size:10.6px;color:#1e1e1e;'>1</span>
<span class="t" style='left:656.2px;top:753px;font-family:"Liberation Sans", sans-serif;font-size:10.6px;color:#1e1e1e;'>2</span>
<span class="t" style='left:687.2px;top:735px;font-family:"Liberation Sans", sans-serif;font-size:10.6px;color:#1e1e1e;letter-spacing:-0.4px;'>48</span>
<span class="t" style='left:687.2px;top:753px;font-family:"Liberation Sans", sans-serif;font-size:10.6px;color:#1e1e1e;letter-spacing:-0.4px;'>57</span>
<span class="t" style='left:761.4px;top:735px;font-family:"Liberation Sans", sans-serif;font-size:10.6px;color:#1e1e1e;letter-spacing:-1.1px;'>KES</span>
<span class="t" style='left:761.4px;top:753px;font-family:"Liberation Sans", sans-serif;font-size:10.6px;color:#1e1e1e;letter-spacing:-0.97px;'>MYR</span>
<span class="t" style='left:874.6px;top:735px;font-family:"Liberation Sans", sans-serif;font-size:10.6px;color:#1e1e1e;letter-spacing:-0.37px;'>Kenyan Shilling</span>
<span class="t" style='left:874.6px;top:753px;font-family:"Liberation Sans", sans-serif;font-size:10.6px;color:#1e1e1e;letter-spacing:-0.33px;'>Malaysian Ringgit</span>
</div></body></html>
